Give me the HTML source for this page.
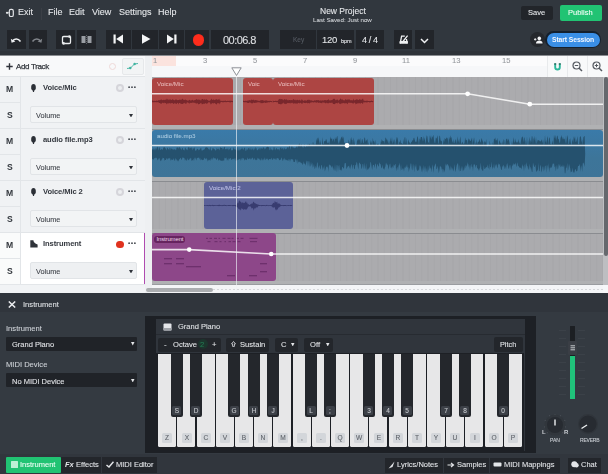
<!DOCTYPE html>
<html><head><meta charset="utf-8">
<style>
*{margin:0;padding:0;box-sizing:border-box}
html,body{width:608px;height:474px;overflow:hidden;background:#31373e;font-family:"Liberation Sans",sans-serif;}
.a{position:absolute;display:block}
.t{position:absolute;white-space:nowrap;line-height:1;-webkit-text-stroke:0.08px currentColor;will-change:transform}
</style></head><body><div id="root" style="position:absolute;left:0;top:0;width:608px;height:474px;overflow:hidden;filter:blur(0.3px)">
<div class="a" style="left:0px;top:0px;width:608px;height:56px;background:#31373e;"></div>
<div class="a" style="left:0px;top:51px;width:608px;height:4px;background:#2e3339;"></div>
<div class="a" style="left:0px;top:55px;width:608px;height:1px;background:#8a8d91;"></div>
<svg class="a" style="left:5px;top:8px;" width="10" height="10" viewBox="0 0 10 10"><rect x="4.3" y="1.3" width="4" height="7.2" rx="1.6" stroke="#e4e6e9" stroke-width="1.2" fill="none"/><circle cx="2" cy="4.8" r="1.1" fill="#e4e6e9"/><path d="M2 4.8 H4.5" stroke="#e4e6e9" stroke-width="0.9"/></svg>
<div class="t" style="left:18px;top:8px;font-size:9px;color:#e6e8eb;">Exit</div>
<div class="a" style="left:41px;top:8px;width:1px;height:12px;background:#3b3f46;"></div>
<div class="t" style="left:48px;top:8px;font-size:9px;color:#e6e8eb;">File</div>
<div class="t" style="left:69px;top:8px;font-size:9px;color:#e6e8eb;">Edit</div>
<div class="t" style="left:92px;top:8px;font-size:9px;color:#e6e8eb;">View</div>
<div class="t" style="left:119px;top:8px;font-size:9px;color:#e6e8eb;">Settings</div>
<div class="t" style="left:158px;top:8px;font-size:9px;color:#e6e8eb;">Help</div>
<div class="t" style="left:320px;top:7px;font-size:8.5px;color:#e6e8eb;">New Project</div>
<div class="t" style="left:313px;top:17px;font-size:6.2px;color:#cfd2d6;">Last Saved: Just now</div>
<div class="a" style="left:521px;top:6px;width:32px;height:14px;background:#22252a;border-radius:2px"></div>
<div class="t" style="left:528px;top:9px;font-size:7.5px;color:#e6e8eb;">Save</div>
<div class="a" style="left:560px;top:5px;width:42px;height:16px;background:#21c373;border-radius:2px"></div>
<div class="t" style="left:568px;top:9px;font-size:7.5px;color:#f2fff7;">Publish</div>
<div class="a" style="left:7px;top:30px;width:19px;height:19px;background:#22252a;"></div>
<div class="a" style="left:29px;top:30px;width:18px;height:19px;background:#22252a;"></div>
<div class="a" style="left:56px;top:30px;width:19px;height:19px;background:#22252a;"></div>
<div class="a" style="left:77px;top:30px;width:19px;height:19px;background:#22252a;"></div>
<div class="a" style="left:106px;top:30px;width:25px;height:19px;background:#22252a;"></div>
<div class="a" style="left:132px;top:30px;width:26px;height:19px;background:#22252a;"></div>
<div class="a" style="left:159px;top:30px;width:25px;height:19px;background:#22252a;"></div>
<div class="a" style="left:185px;top:30px;width:24px;height:19px;background:#22252a;"></div>
<div class="a" style="left:211px;top:30px;width:58px;height:19px;background:#22252a;"></div>
<div class="a" style="left:280px;top:30px;width:36px;height:19px;background:#22252a;"></div>
<div class="a" style="left:317px;top:30px;width:37px;height:19px;background:#22252a;"></div>
<div class="a" style="left:356px;top:30px;width:28px;height:19px;background:#22252a;"></div>
<div class="a" style="left:394px;top:30px;width:18px;height:19px;background:#22252a;"></div>
<div class="a" style="left:415px;top:30px;width:19px;height:19px;background:#22252a;"></div>
<svg class="a" style="left:10px;top:36px;" width="12" height="8" viewBox="0 0 12 8"><path d="M2.5 5.5 C4 2.5 8 2 10.5 5.5" stroke="#eceef0" stroke-width="1.6" fill="none"/><path d="M0.8 2.8 L1.6 6.8 L5.4 5.6 Z" fill="#eceef0"/></svg>
<svg class="a" style="left:31px;top:36px;" width="12" height="8" viewBox="0 0 12 8"><path d="M9.5 5.5 C8 2.5 4 2 1.5 5.5" stroke="#80848a" stroke-width="1.6" fill="none"/><path d="M11.2 2.8 L10.4 6.8 L6.6 5.6 Z" fill="#80848a"/></svg>
<svg class="a" style="left:60.5px;top:34.5px;" width="11" height="10" viewBox="0 0 11 10"><path d="M7.5 1.5 H2.8 Q1.5 1.5 1.5 2.8 V8.5 M3.5 8.5 H8.2 Q9.5 8.5 9.5 7.2 V1.5" stroke="#eceef0" stroke-width="1.3" fill="none"/><circle cx="8.4" cy="1.6" r="1.35" fill="#eceef0"/><circle cx="2.6" cy="8.4" r="1.35" fill="#eceef0"/></svg>
<svg class="a" style="left:80px;top:35px;" width="13" height="9" viewBox="0 0 13 9"><rect x="1.5" y="1" width="4" height="7" fill="#9a9ea4"/><rect x="7.5" y="1" width="4" height="7" fill="#9a9ea4"/><path d="M6.5 0v9" stroke="#6b6f75" stroke-width="0.8" stroke-dasharray="1 1"/></svg>
<svg class="a" style="left:113px;top:34px;" width="11" height="10" viewBox="0 0 11 10"><rect x="0.5" y="0.5" width="2.2" height="9" fill="#f4f5f6"/><path d="M10 0.5 L3.2 5 L10 9.5 Z" fill="#f4f5f6"/></svg>
<svg class="a" style="left:141px;top:34px;" width="10" height="10" viewBox="0 0 10 10"><path d="M1 0.3 L9.5 5 L1 9.7 Z" fill="#f4f5f6"/></svg>
<svg class="a" style="left:167px;top:34px;" width="10" height="10" viewBox="0 0 10 10"><rect x="7.3" y="0.5" width="2.2" height="9" fill="#f4f5f6"/><path d="M0 0.5 L6.8 5 L0 9.5 Z" fill="#f4f5f6"/></svg>
<div class="a" style="left:192.5px;top:34px;width:11.5px;height:11.5px;background:radial-gradient(circle,#ff2d1c 55%,#e0221a 100%);border-radius:50%"></div>
<div class="t" style="left:223px;top:35px;font-size:11px;color:#dfe1e4;letter-spacing:-0.55px">00:06.8</div>
<div class="t" style="left:293px;top:37px;font-size:6.5px;color:#575c64;">Key</div>
<div class="t" style="left:322px;top:35.2px;font-size:9.5px;color:#e6e8eb;letter-spacing:-0.3px">120</div>
<div class="t" style="left:340.5px;top:38.8px;font-size:5.5px;color:#e6e8eb;">bpm</div>
<div class="t" style="left:362px;top:35.5px;font-size:9px;color:#e6e8eb;letter-spacing:-0.4px">4 / 4</div>
<svg class="a" style="left:399px;top:35px;" width="10" height="9" viewBox="0 0 10 9"><path d="M1.2 8.3 L2.6 1.2 H5.8" fill="none" stroke="#f0f1f3" stroke-width="1.3"/><path d="M8.2 8.3 L7.4 4" fill="none" stroke="#f0f1f3" stroke-width="1.3"/><path d="M4 6.5 L8.6 0.6" stroke="#f0f1f3" stroke-width="1.3"/><rect x="0.6" y="6" width="8.2" height="2.8" rx="0.5" fill="#f0f1f3"/></svg>
<svg class="a" style="left:420px;top:38px;" width="9" height="6" viewBox="0 0 9 6"><path d="M1 1 L4.5 4.5 L8 1" stroke="#f0f1f3" stroke-width="1.5" fill="none"/></svg>
<div class="a" style="left:530px;top:32px;width:15px;height:15px;background:#25282d;border-radius:50%"></div>
<svg class="a" style="left:533px;top:35.5px;" width="11" height="9" viewBox="0 0 11 9"><circle cx="6.3" cy="2.4" r="1.8" fill="#f2f3f5"/><path d="M3 7.4 C3 5.4 4.6 4.6 6.3 4.6 C8 4.6 9.6 5.4 9.6 7.4 Z" fill="#f2f3f5"/><path d="M1 3.4h2.4M2.2 2.2v2.4" stroke="#f2f3f5" stroke-width="0.9"/></svg>
<div class="a" style="left:545px;top:31px;width:56px;height:17px;background:#15202d;border-radius:9px"></div>
<div class="a" style="left:546.5px;top:32.5px;width:53px;height:14px;background:#3a8fe6;border-radius:7px"></div>
<div class="t" style="left:552px;top:37.2px;font-size:6.8px;color:#f2f7ff;font-weight:bold;letter-spacing:-0.1px;-webkit-text-stroke:0">Start Session</div>
<div class="a" style="left:0px;top:56px;width:608px;height:237px;background:#f6f7f9;"></div>
<div class="a" style="left:0px;top:56px;width:145px;height:20px;background:#f8f9fa;"></div>
<svg class="a" style="left:6px;top:63px;" width="7" height="7" viewBox="0 0 7 7"><path d="M3.5 0.3v6.4M0.3 3.5h6.4" stroke="#2f333a" stroke-width="1.4"/></svg>
<div class="t" style="left:15.8px;top:62.8px;font-size:8px;color:#33373d;letter-spacing:-0.35px;-webkit-text-stroke:0.25px #33373d">Add Track</div>
<div class="a" style="left:109px;top:63px;width:7.2px;height:7.2px;background:transparent;border-radius:50%;border:1.2px solid #efd9d8"></div>
<div class="a" style="left:121.5px;top:58px;width:22.5px;height:16.5px;background:#f2f4f5;border-radius:2px;border:1px solid #e6e8ea"></div>
<svg class="a" style="left:126px;top:62px;" width="13" height="8" viewBox="0 0 13 8"><path d="M1 6.5 L4.5 6 L8.5 2 L12 1.5" stroke="#3fb3a0" stroke-width="0.9" fill="none"/><circle cx="4.3" cy="6" r="1.2" fill="#3fb3a0"/><circle cx="8.6" cy="2" r="1.2" fill="#3fb3a0"/></svg>
<div class="a" style="left:145px;top:56px;width:7px;height:237px;background:#eef0f2;"></div>
<div class="a" style="left:152px;top:56px;width:456px;height:21px;background:#fbfbfc;"></div>
<div class="a" style="left:152px;top:66px;width:395px;height:11px;background:#f6f7f9;"></div>
<div class="a" style="left:152px;top:56px;width:24px;height:10px;background:#fbe3de;"></div>
<div class="t" style="left:153.3px;top:57px;font-size:7.6px;color:#95989d;">1</div>
<div class="t" style="left:203.3px;top:57px;font-size:7.6px;color:#95989d;">3</div>
<div class="t" style="left:253.3px;top:57px;font-size:7.6px;color:#95989d;">5</div>
<div class="t" style="left:303.3px;top:57px;font-size:7.6px;color:#95989d;">7</div>
<div class="t" style="left:353.3px;top:57px;font-size:7.6px;color:#95989d;">9</div>
<div class="t" style="left:401.6px;top:57px;font-size:7.6px;color:#95989d;">11</div>
<div class="t" style="left:451.6px;top:57px;font-size:7.6px;color:#95989d;">13</div>
<div class="t" style="left:501.6px;top:57px;font-size:7.6px;color:#95989d;">15</div>
<div class="a" style="left:547px;top:56px;width:61px;height:21px;background:#f8f9fa;"></div>
<div class="a" style="left:547px;top:56px;width:1px;height:21px;background:#e8eaec;"></div>
<div class="a" style="left:567px;top:56px;width:1px;height:21px;background:#e8eaec;"></div>
<div class="a" style="left:587px;top:56px;width:1px;height:21px;background:#e8eaec;"></div>
<svg class="a" style="left:554px;top:62.5px;" width="7" height="8" viewBox="0 0 7 8"><path d="M1.2 0.5 V4.2 A2.3 2.3 0 0 0 5.8 4.2 V0.5" stroke="#2bb79a" stroke-width="1.9" fill="none"/><path d="M1.2 0.3 V1.8 M5.8 0.3 V1.8" stroke="#2d6a60" stroke-width="1.9"/></svg>
<svg class="a" style="left:572px;top:61px;" width="11" height="11" viewBox="0 0 11 11"><circle cx="4.5" cy="4.5" r="3.5" stroke="#555a61" stroke-width="1.2" fill="none"/><path d="M7 7 L10 10" stroke="#555a61" stroke-width="1.5"/><path d="M2.8 4.5h3.4" stroke="#555a61" stroke-width="1"/></svg>
<svg class="a" style="left:592px;top:61px;" width="11" height="11" viewBox="0 0 11 11"><circle cx="4.5" cy="4.5" r="3.5" stroke="#555a61" stroke-width="1.2" fill="none"/><path d="M7 7 L10 10" stroke="#555a61" stroke-width="1.5"/><path d="M2.8 4.5h3.4M4.5 2.8v3.4" stroke="#555a61" stroke-width="1"/></svg>
<div class="a" style="left:152px;top:77px;width:451px;height:208px;background:#ababae;"></div>
<svg class="a" style="left:152px;top:77px;" width="451" height="208" viewBox="0 0 451 208"><rect x="0.50" y="0" width="1" height="208" fill="#000" opacity="0.035"/><rect x="6.75" y="0" width="1" height="208" fill="#000" opacity="0.02"/><rect x="13.00" y="0" width="1" height="208" fill="#000" opacity="0.02"/><rect x="19.25" y="0" width="1" height="208" fill="#000" opacity="0.02"/><rect x="25.50" y="0" width="1" height="208" fill="#000" opacity="0.035"/><rect x="31.75" y="0" width="1" height="208" fill="#000" opacity="0.02"/><rect x="38.00" y="0" width="1" height="208" fill="#000" opacity="0.02"/><rect x="44.25" y="0" width="1" height="208" fill="#000" opacity="0.02"/><rect x="50.50" y="0" width="1" height="208" fill="#000" opacity="0.035"/><rect x="56.75" y="0" width="1" height="208" fill="#000" opacity="0.02"/><rect x="63.00" y="0" width="1" height="208" fill="#000" opacity="0.02"/><rect x="69.25" y="0" width="1" height="208" fill="#000" opacity="0.02"/><rect x="75.50" y="0" width="1" height="208" fill="#000" opacity="0.035"/><rect x="81.75" y="0" width="1" height="208" fill="#000" opacity="0.02"/><rect x="88.00" y="0" width="1" height="208" fill="#000" opacity="0.02"/><rect x="94.25" y="0" width="1" height="208" fill="#000" opacity="0.02"/><rect x="100.50" y="0" width="1" height="208" fill="#000" opacity="0.035"/><rect x="106.75" y="0" width="1" height="208" fill="#000" opacity="0.02"/><rect x="113.00" y="0" width="1" height="208" fill="#000" opacity="0.02"/><rect x="119.25" y="0" width="1" height="208" fill="#000" opacity="0.02"/><rect x="125.50" y="0" width="1" height="208" fill="#000" opacity="0.035"/><rect x="131.75" y="0" width="1" height="208" fill="#000" opacity="0.02"/><rect x="138.00" y="0" width="1" height="208" fill="#000" opacity="0.02"/><rect x="144.25" y="0" width="1" height="208" fill="#000" opacity="0.02"/><rect x="150.50" y="0" width="1" height="208" fill="#000" opacity="0.035"/><rect x="156.75" y="0" width="1" height="208" fill="#000" opacity="0.02"/><rect x="163.00" y="0" width="1" height="208" fill="#000" opacity="0.02"/><rect x="169.25" y="0" width="1" height="208" fill="#000" opacity="0.02"/><rect x="175.50" y="0" width="1" height="208" fill="#000" opacity="0.035"/><rect x="181.75" y="0" width="1" height="208" fill="#000" opacity="0.02"/><rect x="188.00" y="0" width="1" height="208" fill="#000" opacity="0.02"/><rect x="194.25" y="0" width="1" height="208" fill="#000" opacity="0.02"/><rect x="200.50" y="0" width="1" height="208" fill="#000" opacity="0.035"/><rect x="206.75" y="0" width="1" height="208" fill="#000" opacity="0.02"/><rect x="213.00" y="0" width="1" height="208" fill="#000" opacity="0.02"/><rect x="219.25" y="0" width="1" height="208" fill="#000" opacity="0.02"/><rect x="225.50" y="0" width="1" height="208" fill="#000" opacity="0.035"/><rect x="231.75" y="0" width="1" height="208" fill="#000" opacity="0.02"/><rect x="238.00" y="0" width="1" height="208" fill="#000" opacity="0.02"/><rect x="244.25" y="0" width="1" height="208" fill="#000" opacity="0.02"/><rect x="250.50" y="0" width="1" height="208" fill="#000" opacity="0.035"/><rect x="256.75" y="0" width="1" height="208" fill="#000" opacity="0.02"/><rect x="263.00" y="0" width="1" height="208" fill="#000" opacity="0.02"/><rect x="269.25" y="0" width="1" height="208" fill="#000" opacity="0.02"/><rect x="275.50" y="0" width="1" height="208" fill="#000" opacity="0.035"/><rect x="281.75" y="0" width="1" height="208" fill="#000" opacity="0.02"/><rect x="288.00" y="0" width="1" height="208" fill="#000" opacity="0.02"/><rect x="294.25" y="0" width="1" height="208" fill="#000" opacity="0.02"/><rect x="300.50" y="0" width="1" height="208" fill="#000" opacity="0.035"/><rect x="306.75" y="0" width="1" height="208" fill="#000" opacity="0.02"/><rect x="313.00" y="0" width="1" height="208" fill="#000" opacity="0.02"/><rect x="319.25" y="0" width="1" height="208" fill="#000" opacity="0.02"/><rect x="325.50" y="0" width="1" height="208" fill="#000" opacity="0.035"/><rect x="331.75" y="0" width="1" height="208" fill="#000" opacity="0.02"/><rect x="338.00" y="0" width="1" height="208" fill="#000" opacity="0.02"/><rect x="344.25" y="0" width="1" height="208" fill="#000" opacity="0.02"/><rect x="350.50" y="0" width="1" height="208" fill="#000" opacity="0.035"/><rect x="356.75" y="0" width="1" height="208" fill="#000" opacity="0.02"/><rect x="363.00" y="0" width="1" height="208" fill="#000" opacity="0.02"/><rect x="369.25" y="0" width="1" height="208" fill="#000" opacity="0.02"/><rect x="375.50" y="0" width="1" height="208" fill="#000" opacity="0.035"/><rect x="381.75" y="0" width="1" height="208" fill="#000" opacity="0.02"/><rect x="388.00" y="0" width="1" height="208" fill="#000" opacity="0.02"/><rect x="394.25" y="0" width="1" height="208" fill="#000" opacity="0.02"/><rect x="400.50" y="0" width="1" height="208" fill="#000" opacity="0.035"/><rect x="406.75" y="0" width="1" height="208" fill="#000" opacity="0.02"/><rect x="413.00" y="0" width="1" height="208" fill="#000" opacity="0.02"/><rect x="419.25" y="0" width="1" height="208" fill="#000" opacity="0.02"/><rect x="425.50" y="0" width="1" height="208" fill="#000" opacity="0.035"/><rect x="431.75" y="0" width="1" height="208" fill="#000" opacity="0.02"/><rect x="438.00" y="0" width="1" height="208" fill="#000" opacity="0.02"/><rect x="444.25" y="0" width="1" height="208" fill="#000" opacity="0.02"/><rect x="450.50" y="0" width="1" height="208" fill="#000" opacity="0.035"/></svg>
<div class="a" style="left:152px;top:125px;width:451px;height:4px;background:#b0b1b3;"></div>
<div class="a" style="left:152px;top:129px;width:451px;height:1px;background:#8a8c90;"></div>
<div class="a" style="left:152px;top:177px;width:451px;height:4px;background:#b0b1b3;"></div>
<div class="a" style="left:152px;top:181px;width:451px;height:1px;background:#8a8c90;"></div>
<div class="a" style="left:152px;top:229px;width:451px;height:4px;background:#b0b1b3;"></div>
<div class="a" style="left:152px;top:233px;width:451px;height:1px;background:#8a8c90;"></div>
<div class="a" style="left:152px;top:281px;width:451px;height:4px;background:#b0b1b3;"></div>
<div class="a" style="left:152px;top:284px;width:451px;height:1px;background:#9a9ca0;"></div>
<div class="a" style="left:603px;top:77px;width:5px;height:208px;background:#bdbec1;"></div>
<div class="a" style="left:603.5px;top:77px;width:4px;height:179px;background:#65686d;border-radius:2px"></div>
<div class="a" style="left:0px;top:76px;width:145px;height:52px;background:#f0f2f4;"></div>
<div class="a" style="left:20px;top:76px;width:125px;height:52px;background:#f0f2f4;"></div>
<div class="a" style="left:0px;top:76px;width:145px;height:1px;background:#e2e5e8;"></div>
<div class="a" style="left:0px;top:101.5px;width:20px;height:1px;background:#e2e5e8;"></div>
<div class="a" style="left:19.5px;top:76px;width:1px;height:52px;background:#e2e5e8;"></div>
<div class="t" style="left:5.6px;top:85.1px;font-size:8.6px;color:#33373d;font-weight:bold;-webkit-text-stroke:0">M</div>
<div class="t" style="left:7.2px;top:111.2px;font-size:8.6px;color:#33373d;font-weight:bold;-webkit-text-stroke:0">S</div>
<svg class="a" style="left:31px;top:83.8px;" width="5" height="8.5" viewBox="0 0 5 8.5"><path d="M2.5 0 C3.9 0 4.8 1.1 4.8 2.8 L4.8 4.6 C4.8 5.8 3.7 6.3 3.1 6.9 L3.1 8.3 L1.9 8.3 L1.9 6.9 C1.3 6.3 0.2 5.8 0.2 4.6 L0.2 2.8 C0.2 1.1 1.1 0 2.5 0 Z" fill="#2b2f36"/></svg>
<div class="t" style="left:42.5px;top:84.4px;font-size:7.6px;color:#34383f;font-weight:bold;letter-spacing:-0.1px;-webkit-text-stroke:0">Voice/Mic</div>
<div class="a" style="left:115.8px;top:84.2px;width:7.8px;height:7.8px;background:#eceef0;border-radius:50%;border:2px solid #d5d5da"></div>
<svg class="a" style="left:127.5px;top:86.3px;" width="8" height="3" viewBox="0 0 8 3"><circle cx="1.1" cy="1.2" r="0.85" fill="#3a3e45"/><circle cx="4" cy="1.2" r="0.85" fill="#3a3e45"/><circle cx="6.9" cy="1.2" r="0.85" fill="#3a3e45"/></svg>
<div class="a" style="left:30px;top:106px;width:107px;height:16.5px;background:#f2f4f5;border-radius:2px;border:1px solid #e1e4e7"></div>
<div class="t" style="left:35.5px;top:112px;font-size:7.3px;color:#3d4148;">Volume</div>
<svg class="a" style="left:128.5px;top:113.5px;" width="4" height="3.5" viewBox="0 0 4 3.5"><path d="M0 0h4L2 3.5z" fill="#2f333a"/></svg>
<div class="a" style="left:0px;top:128px;width:145px;height:52px;background:#f0f2f4;"></div>
<div class="a" style="left:20px;top:128px;width:125px;height:52px;background:#f0f2f4;"></div>
<div class="a" style="left:0px;top:128px;width:145px;height:1px;background:#e2e5e8;"></div>
<div class="a" style="left:0px;top:153.5px;width:20px;height:1px;background:#e2e5e8;"></div>
<div class="a" style="left:19.5px;top:128px;width:1px;height:52px;background:#e2e5e8;"></div>
<div class="t" style="left:5.6px;top:137.1px;font-size:8.6px;color:#33373d;font-weight:bold;-webkit-text-stroke:0">M</div>
<div class="t" style="left:7.2px;top:163.2px;font-size:8.6px;color:#33373d;font-weight:bold;-webkit-text-stroke:0">S</div>
<svg class="a" style="left:31px;top:135.8px;" width="5" height="8.5" viewBox="0 0 5 8.5"><path d="M2.5 0 C3.9 0 4.8 1.1 4.8 2.8 L4.8 4.6 C4.8 5.8 3.7 6.3 3.1 6.9 L3.1 8.3 L1.9 8.3 L1.9 6.9 C1.3 6.3 0.2 5.8 0.2 4.6 L0.2 2.8 C0.2 1.1 1.1 0 2.5 0 Z" fill="#2b2f36"/></svg>
<div class="t" style="left:42.5px;top:136.4px;font-size:7.6px;color:#34383f;font-weight:bold;letter-spacing:-0.1px;-webkit-text-stroke:0">audio file.mp3</div>
<div class="a" style="left:115.8px;top:136.2px;width:7.8px;height:7.8px;background:#eceef0;border-radius:50%;border:2px solid #d5d5da"></div>
<svg class="a" style="left:127.5px;top:138.3px;" width="8" height="3" viewBox="0 0 8 3"><circle cx="1.1" cy="1.2" r="0.85" fill="#3a3e45"/><circle cx="4" cy="1.2" r="0.85" fill="#3a3e45"/><circle cx="6.9" cy="1.2" r="0.85" fill="#3a3e45"/></svg>
<div class="a" style="left:30px;top:158px;width:107px;height:16.5px;background:#f2f4f5;border-radius:2px;border:1px solid #e1e4e7"></div>
<div class="t" style="left:35.5px;top:164px;font-size:7.3px;color:#3d4148;">Volume</div>
<svg class="a" style="left:128.5px;top:165.5px;" width="4" height="3.5" viewBox="0 0 4 3.5"><path d="M0 0h4L2 3.5z" fill="#2f333a"/></svg>
<div class="a" style="left:0px;top:180px;width:145px;height:52px;background:#f0f2f4;"></div>
<div class="a" style="left:20px;top:180px;width:125px;height:52px;background:#f0f2f4;"></div>
<div class="a" style="left:0px;top:180px;width:145px;height:1px;background:#e2e5e8;"></div>
<div class="a" style="left:0px;top:205.5px;width:20px;height:1px;background:#e2e5e8;"></div>
<div class="a" style="left:19.5px;top:180px;width:1px;height:52px;background:#e2e5e8;"></div>
<div class="t" style="left:5.6px;top:189.1px;font-size:8.6px;color:#33373d;font-weight:bold;-webkit-text-stroke:0">M</div>
<div class="t" style="left:7.2px;top:215.2px;font-size:8.6px;color:#33373d;font-weight:bold;-webkit-text-stroke:0">S</div>
<svg class="a" style="left:31px;top:187.8px;" width="5" height="8.5" viewBox="0 0 5 8.5"><path d="M2.5 0 C3.9 0 4.8 1.1 4.8 2.8 L4.8 4.6 C4.8 5.8 3.7 6.3 3.1 6.9 L3.1 8.3 L1.9 8.3 L1.9 6.9 C1.3 6.3 0.2 5.8 0.2 4.6 L0.2 2.8 C0.2 1.1 1.1 0 2.5 0 Z" fill="#2b2f36"/></svg>
<div class="t" style="left:42.5px;top:188.4px;font-size:7.6px;color:#34383f;font-weight:bold;letter-spacing:-0.1px;-webkit-text-stroke:0">Voice/Mic 2</div>
<div class="a" style="left:115.8px;top:188.2px;width:7.8px;height:7.8px;background:#eceef0;border-radius:50%;border:2px solid #d5d5da"></div>
<svg class="a" style="left:127.5px;top:190.3px;" width="8" height="3" viewBox="0 0 8 3"><circle cx="1.1" cy="1.2" r="0.85" fill="#3a3e45"/><circle cx="4" cy="1.2" r="0.85" fill="#3a3e45"/><circle cx="6.9" cy="1.2" r="0.85" fill="#3a3e45"/></svg>
<div class="a" style="left:30px;top:210px;width:107px;height:16.5px;background:#f2f4f5;border-radius:2px;border:1px solid #e1e4e7"></div>
<div class="t" style="left:35.5px;top:216px;font-size:7.3px;color:#3d4148;">Volume</div>
<svg class="a" style="left:128.5px;top:217.5px;" width="4" height="3.5" viewBox="0 0 4 3.5"><path d="M0 0h4L2 3.5z" fill="#2f333a"/></svg>
<div class="a" style="left:0px;top:232px;width:145px;height:52px;background:#fafbfb;"></div>
<div class="a" style="left:20px;top:232px;width:125px;height:52px;background:#ffffff;"></div>
<div class="a" style="left:0px;top:232px;width:145px;height:1px;background:#e2e5e8;"></div>
<div class="a" style="left:0px;top:257.5px;width:20px;height:1px;background:#e2e5e8;"></div>
<div class="a" style="left:19.5px;top:232px;width:1px;height:52px;background:#e2e5e8;"></div>
<div class="t" style="left:5.6px;top:241.1px;font-size:8.6px;color:#33373d;font-weight:bold;-webkit-text-stroke:0">M</div>
<div class="t" style="left:7.2px;top:267.2px;font-size:8.6px;color:#33373d;font-weight:bold;-webkit-text-stroke:0">S</div>
<svg class="a" style="left:29.5px;top:240px;" width="8" height="8" viewBox="0 0 8 8"><path d="M0.3 0.3 H3.4 C3.6 2.6 5 3.6 7.6 4.4 V7.6 H0.3 Z" fill="#2f333a"/></svg>
<div class="t" style="left:42.5px;top:240.4px;font-size:7.6px;color:#34383f;font-weight:bold;letter-spacing:-0.1px;-webkit-text-stroke:0">Instrument</div>
<div class="a" style="left:116px;top:240.5px;width:7.5px;height:7.5px;background:#e0321e;border-radius:50%"></div>
<div class="a" style="left:143.5px;top:233px;width:1.5px;height:51px;background:#b04bb0;"></div>
<svg class="a" style="left:127.5px;top:242.3px;" width="8" height="3" viewBox="0 0 8 3"><circle cx="1.1" cy="1.2" r="0.85" fill="#3a3e45"/><circle cx="4" cy="1.2" r="0.85" fill="#3a3e45"/><circle cx="6.9" cy="1.2" r="0.85" fill="#3a3e45"/></svg>
<div class="a" style="left:30px;top:262px;width:107px;height:16.5px;background:#eef0f2;border-radius:2px;border:1px solid #e1e4e7"></div>
<div class="t" style="left:35.5px;top:268px;font-size:7.3px;color:#3d4148;">Volume</div>
<svg class="a" style="left:128.5px;top:269.5px;" width="4" height="3.5" viewBox="0 0 4 3.5"><path d="M0 0h4L2 3.5z" fill="#2f333a"/></svg>
<div class="a" style="left:0px;top:284px;width:145px;height:9px;background:#f1f3f5;"></div>
<div class="a" style="left:0px;top:284px;width:145px;height:1px;background:#e3e6e9;"></div>
<div class="a" style="left:152px;top:285px;width:451px;height:8px;background:#f4f5f7;"></div>
<svg class="a" style="left:152px;top:289px;" width="451" height="1" viewBox="0 0 451 1"><rect x="1.00" y="0" width="2" height="1" fill="#d5d7da"/><rect x="5.00" y="0" width="2" height="1" fill="#d5d7da"/><rect x="9.00" y="0" width="2" height="1" fill="#d5d7da"/><rect x="13.00" y="0" width="2" height="1" fill="#d5d7da"/><rect x="17.00" y="0" width="2" height="1" fill="#d5d7da"/><rect x="21.00" y="0" width="2" height="1" fill="#d5d7da"/><rect x="25.00" y="0" width="2" height="1" fill="#d5d7da"/><rect x="29.00" y="0" width="2" height="1" fill="#d5d7da"/><rect x="33.00" y="0" width="2" height="1" fill="#d5d7da"/><rect x="37.00" y="0" width="2" height="1" fill="#d5d7da"/><rect x="41.00" y="0" width="2" height="1" fill="#d5d7da"/><rect x="45.00" y="0" width="2" height="1" fill="#d5d7da"/><rect x="49.00" y="0" width="2" height="1" fill="#d5d7da"/><rect x="53.00" y="0" width="2" height="1" fill="#d5d7da"/><rect x="57.00" y="0" width="2" height="1" fill="#d5d7da"/><rect x="61.00" y="0" width="2" height="1" fill="#d5d7da"/><rect x="65.00" y="0" width="2" height="1" fill="#d5d7da"/><rect x="69.00" y="0" width="2" height="1" fill="#d5d7da"/><rect x="73.00" y="0" width="2" height="1" fill="#d5d7da"/><rect x="77.00" y="0" width="2" height="1" fill="#d5d7da"/><rect x="81.00" y="0" width="2" height="1" fill="#d5d7da"/><rect x="85.00" y="0" width="2" height="1" fill="#d5d7da"/><rect x="89.00" y="0" width="2" height="1" fill="#d5d7da"/><rect x="93.00" y="0" width="2" height="1" fill="#d5d7da"/><rect x="97.00" y="0" width="2" height="1" fill="#d5d7da"/><rect x="101.00" y="0" width="2" height="1" fill="#d5d7da"/><rect x="105.00" y="0" width="2" height="1" fill="#d5d7da"/><rect x="109.00" y="0" width="2" height="1" fill="#d5d7da"/><rect x="113.00" y="0" width="2" height="1" fill="#d5d7da"/><rect x="117.00" y="0" width="2" height="1" fill="#d5d7da"/><rect x="121.00" y="0" width="2" height="1" fill="#d5d7da"/><rect x="125.00" y="0" width="2" height="1" fill="#d5d7da"/><rect x="129.00" y="0" width="2" height="1" fill="#d5d7da"/><rect x="133.00" y="0" width="2" height="1" fill="#d5d7da"/><rect x="137.00" y="0" width="2" height="1" fill="#d5d7da"/><rect x="141.00" y="0" width="2" height="1" fill="#d5d7da"/><rect x="145.00" y="0" width="2" height="1" fill="#d5d7da"/><rect x="149.00" y="0" width="2" height="1" fill="#d5d7da"/><rect x="153.00" y="0" width="2" height="1" fill="#d5d7da"/><rect x="157.00" y="0" width="2" height="1" fill="#d5d7da"/><rect x="161.00" y="0" width="2" height="1" fill="#d5d7da"/><rect x="165.00" y="0" width="2" height="1" fill="#d5d7da"/><rect x="169.00" y="0" width="2" height="1" fill="#d5d7da"/><rect x="173.00" y="0" width="2" height="1" fill="#d5d7da"/><rect x="177.00" y="0" width="2" height="1" fill="#d5d7da"/><rect x="181.00" y="0" width="2" height="1" fill="#d5d7da"/><rect x="185.00" y="0" width="2" height="1" fill="#d5d7da"/><rect x="189.00" y="0" width="2" height="1" fill="#d5d7da"/><rect x="193.00" y="0" width="2" height="1" fill="#d5d7da"/><rect x="197.00" y="0" width="2" height="1" fill="#d5d7da"/><rect x="201.00" y="0" width="2" height="1" fill="#d5d7da"/><rect x="205.00" y="0" width="2" height="1" fill="#d5d7da"/><rect x="209.00" y="0" width="2" height="1" fill="#d5d7da"/><rect x="213.00" y="0" width="2" height="1" fill="#d5d7da"/><rect x="217.00" y="0" width="2" height="1" fill="#d5d7da"/><rect x="221.00" y="0" width="2" height="1" fill="#d5d7da"/><rect x="225.00" y="0" width="2" height="1" fill="#d5d7da"/><rect x="229.00" y="0" width="2" height="1" fill="#d5d7da"/><rect x="233.00" y="0" width="2" height="1" fill="#d5d7da"/><rect x="237.00" y="0" width="2" height="1" fill="#d5d7da"/><rect x="241.00" y="0" width="2" height="1" fill="#d5d7da"/><rect x="245.00" y="0" width="2" height="1" fill="#d5d7da"/><rect x="249.00" y="0" width="2" height="1" fill="#d5d7da"/><rect x="253.00" y="0" width="2" height="1" fill="#d5d7da"/><rect x="257.00" y="0" width="2" height="1" fill="#d5d7da"/><rect x="261.00" y="0" width="2" height="1" fill="#d5d7da"/><rect x="265.00" y="0" width="2" height="1" fill="#d5d7da"/><rect x="269.00" y="0" width="2" height="1" fill="#d5d7da"/><rect x="273.00" y="0" width="2" height="1" fill="#d5d7da"/><rect x="277.00" y="0" width="2" height="1" fill="#d5d7da"/><rect x="281.00" y="0" width="2" height="1" fill="#d5d7da"/><rect x="285.00" y="0" width="2" height="1" fill="#d5d7da"/><rect x="289.00" y="0" width="2" height="1" fill="#d5d7da"/><rect x="293.00" y="0" width="2" height="1" fill="#d5d7da"/><rect x="297.00" y="0" width="2" height="1" fill="#d5d7da"/><rect x="301.00" y="0" width="2" height="1" fill="#d5d7da"/><rect x="305.00" y="0" width="2" height="1" fill="#d5d7da"/><rect x="309.00" y="0" width="2" height="1" fill="#d5d7da"/><rect x="313.00" y="0" width="2" height="1" fill="#d5d7da"/><rect x="317.00" y="0" width="2" height="1" fill="#d5d7da"/><rect x="321.00" y="0" width="2" height="1" fill="#d5d7da"/><rect x="325.00" y="0" width="2" height="1" fill="#d5d7da"/><rect x="329.00" y="0" width="2" height="1" fill="#d5d7da"/><rect x="333.00" y="0" width="2" height="1" fill="#d5d7da"/><rect x="337.00" y="0" width="2" height="1" fill="#d5d7da"/><rect x="341.00" y="0" width="2" height="1" fill="#d5d7da"/><rect x="345.00" y="0" width="2" height="1" fill="#d5d7da"/><rect x="349.00" y="0" width="2" height="1" fill="#d5d7da"/><rect x="353.00" y="0" width="2" height="1" fill="#d5d7da"/><rect x="357.00" y="0" width="2" height="1" fill="#d5d7da"/><rect x="361.00" y="0" width="2" height="1" fill="#d5d7da"/><rect x="365.00" y="0" width="2" height="1" fill="#d5d7da"/><rect x="369.00" y="0" width="2" height="1" fill="#d5d7da"/><rect x="373.00" y="0" width="2" height="1" fill="#d5d7da"/><rect x="377.00" y="0" width="2" height="1" fill="#d5d7da"/><rect x="381.00" y="0" width="2" height="1" fill="#d5d7da"/><rect x="385.00" y="0" width="2" height="1" fill="#d5d7da"/><rect x="389.00" y="0" width="2" height="1" fill="#d5d7da"/><rect x="393.00" y="0" width="2" height="1" fill="#d5d7da"/><rect x="397.00" y="0" width="2" height="1" fill="#d5d7da"/><rect x="401.00" y="0" width="2" height="1" fill="#d5d7da"/><rect x="405.00" y="0" width="2" height="1" fill="#d5d7da"/><rect x="409.00" y="0" width="2" height="1" fill="#d5d7da"/><rect x="413.00" y="0" width="2" height="1" fill="#d5d7da"/><rect x="417.00" y="0" width="2" height="1" fill="#d5d7da"/><rect x="421.00" y="0" width="2" height="1" fill="#d5d7da"/><rect x="425.00" y="0" width="2" height="1" fill="#d5d7da"/><rect x="429.00" y="0" width="2" height="1" fill="#d5d7da"/><rect x="433.00" y="0" width="2" height="1" fill="#d5d7da"/><rect x="437.00" y="0" width="2" height="1" fill="#d5d7da"/><rect x="441.00" y="0" width="2" height="1" fill="#d5d7da"/><rect x="445.00" y="0" width="2" height="1" fill="#d5d7da"/><rect x="449.00" y="0" width="2" height="1" fill="#d5d7da"/></svg>
<div class="a" style="left:145.5px;top:288px;width:67.5px;height:4px;background:#abadb0;border-radius:2px"></div>
<div class="a" style="left:152px;top:77.5px;width:81px;height:47.5px;background:#ad4543;border-radius:3px;overflow:hidden">
<svg class="a" style="left:0;top:0" width="81" height="47.5" viewBox="0 0 81 47.5"><path d="M0.0 22.8 L0.6 22.6 L1.2 22.8 L1.8 22.9 L2.4 22.7 L3.0 23.0 L3.6 23.0 L4.2 22.7 L4.8 22.6 L5.4 22.7 L6.0 23.0 L6.6 22.0 L7.2 22.0 L7.8 22.5 L8.4 21.9 L9.0 21.5 L9.6 21.5 L10.2 22.3 L10.8 22.0 L11.4 22.1 L12.0 21.5 L12.6 22.2 L13.2 21.8 L13.8 21.8 L14.4 20.4 L15.0 22.6 L15.6 20.7 L16.2 21.2 L16.8 22.3 L17.4 21.1 L18.0 22.6 L18.6 21.0 L19.2 22.1 L19.8 21.9 L20.4 21.3 L21.0 21.2 L21.6 21.9 L22.2 22.0 L22.8 22.6 L23.4 21.7 L24.0 21.0 L24.6 21.8 L25.2 22.2 L25.8 22.1 L26.4 21.9 L27.0 22.1 L27.6 21.4 L28.2 21.6 L28.8 21.9 L29.4 21.7 L30.0 21.3 L30.6 20.5 L31.2 21.7 L31.8 21.7 L32.4 21.8 L33.0 22.3 L33.6 21.2 L34.2 22.0 L34.8 22.2 L35.4 22.5 L36.0 22.8 L36.6 22.5 L37.2 21.8 L37.8 22.0 L38.4 22.4 L39.0 22.4 L39.6 22.2 L40.2 21.9 L40.8 21.8 L41.4 22.7 L42.0 22.2 L42.6 22.3 L43.2 21.8 L43.8 22.0 L44.4 21.1 L45.0 21.3 L45.6 21.8 L46.2 22.2 L46.8 21.1 L47.4 22.1 L48.0 21.6 L48.6 22.4 L49.2 22.6 L49.8 21.0 L50.4 20.9 L51.0 20.9 L51.6 21.9 L52.2 21.3 L52.8 21.6 L53.4 21.9 L54.0 21.2 L54.6 21.2 L55.2 22.3 L55.8 21.7 L56.4 22.7 L57.0 22.7 L57.6 22.8 L58.2 22.5 L58.8 21.8 L59.4 20.5 L60.0 21.8 L60.6 21.9 L61.2 21.3 L61.8 21.7 L62.4 22.2 L63.0 21.5 L63.6 21.7 L64.2 21.2 L64.8 21.3 L65.4 21.8 L66.0 21.8 L66.6 21.0 L67.2 22.5 L67.8 20.5 L68.4 22.7 L69.0 22.9 L69.6 22.8 L70.2 22.9 L70.8 22.7 L71.4 22.9 L72.0 22.6 L72.6 23.0 L73.2 22.6 L73.8 22.7 L74.4 22.9 L75.0 23.1 L75.6 22.8 L76.2 22.7 L76.8 23.0 L77.4 22.7 L78.0 22.7 L78.6 22.7 L79.2 22.7 L79.8 22.8 L80.4 23.1 L81.0 22.7 L81.0 24.1 L80.4 24.2 L79.8 24.1 L79.2 24.1 L78.6 24.4 L78.0 24.3 L77.4 24.2 L76.8 23.9 L76.2 24.1 L75.6 23.9 L75.0 24.0 L74.4 24.3 L73.8 24.2 L73.2 23.9 L72.6 23.9 L72.0 24.2 L71.4 24.3 L70.8 24.2 L70.2 24.2 L69.6 24.1 L69.0 24.0 L68.4 24.4 L67.8 26.5 L67.2 24.9 L66.6 25.6 L66.0 24.8 L65.4 25.2 L64.8 26.2 L64.2 26.4 L63.6 25.7 L63.0 25.3 L62.4 24.7 L61.8 25.7 L61.2 25.0 L60.6 25.3 L60.0 25.0 L59.4 26.0 L58.8 26.4 L58.2 25.2 L57.6 24.3 L57.0 24.2 L56.4 24.2 L55.8 25.2 L55.2 25.5 L54.6 25.8 L54.0 25.5 L53.4 24.9 L52.8 25.8 L52.2 25.7 L51.6 25.5 L51.0 26.3 L50.4 26.1 L49.8 26.2 L49.2 24.8 L48.6 25.1 L48.0 25.7 L47.4 26.1 L46.8 26.2 L46.2 26.2 L45.6 24.9 L45.0 25.6 L44.4 25.6 L43.8 25.4 L43.2 24.7 L42.6 25.0 L42.0 24.4 L41.4 24.7 L40.8 24.6 L40.2 24.8 L39.6 25.0 L39.0 24.8 L38.4 25.1 L37.8 24.7 L37.2 25.9 L36.6 24.8 L36.0 24.8 L35.4 24.3 L34.8 24.6 L34.2 25.9 L33.6 26.0 L33.0 24.6 L32.4 25.2 L31.8 25.2 L31.2 25.5 L30.6 25.9 L30.0 25.9 L29.4 25.8 L28.8 26.0 L28.2 24.9 L27.6 25.1 L27.0 25.0 L26.4 26.5 L25.8 24.8 L25.2 25.0 L24.6 25.9 L24.0 25.8 L23.4 25.4 L22.8 24.7 L22.2 25.8 L21.6 25.9 L21.0 25.6 L20.4 24.9 L19.8 25.0 L19.2 25.2 L18.6 25.8 L18.0 24.7 L17.4 25.2 L16.8 25.4 L16.2 25.2 L15.6 25.8 L15.0 24.9 L14.4 26.5 L13.8 24.9 L13.2 24.9 L12.6 24.5 L12.0 25.4 L11.4 24.8 L10.8 25.0 L10.2 24.6 L9.6 25.7 L9.0 25.7 L8.4 25.5 L7.8 25.1 L7.2 25.1 L6.6 24.4 L6.0 23.9 L5.4 24.3 L4.8 24.4 L4.2 23.9 L3.6 24.3 L3.0 24.1 L2.4 24.3 L1.8 24.2 L1.2 24.3 L0.6 24.2 L0.0 24.2 Z" fill="#79272c"/></svg>
<div class="t" style="left:4.5px;top:3.8px;font-size:6.2px;color:#e3b0b0">Voice/Mic</div>
</div>
<div class="a" style="left:243px;top:77.5px;width:29.5px;height:47.5px;background:#ad4543;border-radius:3px;overflow:hidden">
<svg class="a" style="left:0;top:0" width="29.5" height="47.5" viewBox="0 0 29.5 47.5"><path d="M0.0 22.8 L0.6 22.7 L1.2 23.1 L1.8 22.9 L2.4 22.7 L3.0 22.8 L3.6 23.0 L4.2 22.5 L4.8 22.8 L5.4 22.5 L6.0 22.2 L6.6 22.1 L7.2 22.8 L7.8 22.0 L8.4 21.6 L9.0 22.0 L9.6 22.1 L10.2 21.4 L10.8 22.1 L11.4 22.5 L12.0 21.9 L12.6 22.1 L13.2 22.4 L13.8 22.1 L14.4 22.6 L15.0 22.8 L15.6 22.7 L16.2 22.9 L16.8 22.7 L17.4 22.3 L18.0 22.5 L18.6 22.0 L19.2 22.2 L19.8 22.0 L20.4 22.4 L21.0 22.7 L21.6 22.8 L22.2 22.5 L22.8 22.6 L23.4 22.3 L24.0 22.8 L24.6 22.8 L25.2 23.0 L25.8 22.8 L26.4 22.7 L27.0 23.1 L27.6 22.7 L28.2 22.9 L28.8 23.1 L29.4 22.6 L29.4 24.4 L28.8 24.3 L28.2 23.9 L27.6 24.1 L27.0 24.1 L26.4 24.4 L25.8 24.1 L25.2 24.4 L24.6 24.4 L24.0 24.4 L23.4 24.8 L22.8 24.9 L22.2 24.7 L21.6 24.4 L21.0 24.6 L20.4 25.1 L19.8 25.3 L19.2 25.0 L18.6 25.1 L18.0 25.5 L17.4 24.5 L16.8 24.4 L16.2 24.2 L15.6 24.3 L15.0 24.2 L14.4 24.3 L13.8 25.0 L13.2 24.2 L12.6 24.8 L12.0 25.1 L11.4 25.0 L10.8 24.3 L10.2 25.0 L9.6 25.2 L9.0 25.5 L8.4 25.3 L7.8 24.5 L7.2 24.8 L6.6 24.2 L6.0 24.9 L5.4 25.1 L4.8 24.8 L4.2 25.1 L3.6 24.2 L3.0 24.3 L2.4 24.3 L1.8 24.3 L1.2 24.2 L0.6 24.0 L0.0 24.3 Z" fill="#79272c"/></svg>
<div class="t" style="left:4.5px;top:3.8px;font-size:6.2px;color:#e3b0b0">Voic</div>
</div>
<div class="a" style="left:273px;top:77.5px;width:100.5px;height:47.5px;background:#ad4543;border-radius:3px;overflow:hidden">
<svg class="a" style="left:0;top:0" width="100.5" height="47.5" viewBox="0 0 100.5 47.5"><path d="M0.0 22.9 L0.6 22.7 L1.2 22.9 L1.8 23.0 L2.4 22.7 L3.0 22.8 L3.6 22.9 L4.2 22.7 L4.8 23.1 L5.4 22.0 L6.0 21.1 L6.6 20.9 L7.2 20.7 L7.8 21.4 L8.4 21.1 L9.0 21.2 L9.6 21.3 L10.2 22.5 L10.8 21.4 L11.4 21.3 L12.0 21.0 L12.6 22.0 L13.2 21.2 L13.8 21.6 L14.4 22.4 L15.0 21.6 L15.6 22.4 L16.2 21.9 L16.8 22.0 L17.4 22.2 L18.0 22.1 L18.6 21.9 L19.2 22.6 L19.8 21.7 L20.4 20.9 L21.0 21.4 L21.6 21.9 L22.2 22.4 L22.8 21.4 L23.4 22.5 L24.0 21.4 L24.6 21.9 L25.2 22.1 L25.8 22.5 L26.4 21.4 L27.0 22.4 L27.6 22.5 L28.2 22.6 L28.8 20.9 L29.4 22.1 L30.0 22.5 L30.6 22.9 L31.2 22.3 L31.8 22.4 L32.4 22.5 L33.0 22.2 L33.6 23.0 L34.2 21.8 L34.8 22.0 L35.4 21.6 L36.0 22.5 L36.6 21.5 L37.2 22.6 L37.8 22.2 L38.4 22.3 L39.0 22.7 L39.6 22.8 L40.2 23.0 L40.8 22.8 L41.4 22.4 L42.0 21.9 L42.6 22.7 L43.2 22.2 L43.8 22.1 L44.4 22.2 L45.0 22.2 L45.6 22.1 L46.2 22.7 L46.8 22.4 L47.4 22.2 L48.0 22.7 L48.6 22.4 L49.2 22.2 L49.8 22.6 L50.4 22.6 L51.0 22.5 L51.6 22.0 L52.2 22.1 L52.8 22.2 L53.4 22.6 L54.0 21.9 L54.6 22.0 L55.2 21.7 L55.8 21.1 L56.4 22.7 L57.0 22.1 L57.6 22.4 L58.2 22.3 L58.8 21.9 L59.4 21.9 L60.0 21.0 L60.6 20.7 L61.2 21.2 L61.8 20.6 L62.4 22.1 L63.0 22.4 L63.6 21.4 L64.2 21.9 L64.8 21.3 L65.4 22.7 L66.0 22.3 L66.6 21.7 L67.2 20.8 L67.8 20.6 L68.4 21.2 L69.0 22.3 L69.6 21.0 L70.2 22.3 L70.8 22.2 L71.4 22.5 L72.0 22.0 L72.6 20.9 L73.2 21.5 L73.8 21.9 L74.4 21.5 L75.0 21.4 L75.6 21.5 L76.2 21.6 L76.8 21.6 L77.4 22.6 L78.0 22.0 L78.6 22.2 L79.2 22.4 L79.8 22.3 L80.4 20.6 L81.0 22.4 L81.6 22.2 L82.2 22.0 L82.8 21.7 L83.4 21.2 L84.0 21.5 L84.6 21.6 L85.2 21.9 L85.8 22.1 L86.4 21.1 L87.0 21.6 L87.6 21.7 L88.2 21.4 L88.8 22.1 L89.4 21.0 L90.0 20.5 L90.6 22.6 L91.2 22.7 L91.8 22.7 L92.4 23.0 L93.0 22.8 L93.6 22.7 L94.2 22.8 L94.8 22.8 L95.4 23.0 L96.0 23.0 L96.6 22.9 L97.2 22.9 L97.8 22.9 L98.4 22.6 L99.0 23.0 L99.6 23.0 L100.2 22.9 L100.2 24.0 L99.6 24.2 L99.0 24.0 L98.4 24.0 L97.8 24.1 L97.2 24.4 L96.6 24.4 L96.0 24.1 L95.4 24.1 L94.8 24.3 L94.2 24.2 L93.6 24.4 L93.0 24.3 L92.4 24.2 L91.8 24.2 L91.2 24.4 L90.6 24.1 L90.0 25.8 L89.4 25.8 L88.8 24.7 L88.2 25.1 L87.6 25.6 L87.0 25.4 L86.4 25.0 L85.8 25.7 L85.2 24.7 L84.6 25.4 L84.0 25.4 L83.4 25.7 L82.8 26.6 L82.2 24.9 L81.6 24.7 L81.0 24.4 L80.4 25.8 L79.8 25.5 L79.2 24.9 L78.6 24.9 L78.0 24.6 L77.4 24.9 L76.8 24.7 L76.2 24.7 L75.6 24.4 L75.0 25.3 L74.4 26.3 L73.8 25.4 L73.2 25.1 L72.6 25.6 L72.0 24.9 L71.4 25.4 L70.8 25.2 L70.2 24.8 L69.6 25.4 L69.0 25.0 L68.4 25.5 L67.8 26.2 L67.2 25.6 L66.6 26.1 L66.0 25.1 L65.4 24.6 L64.8 24.7 L64.2 25.7 L63.6 25.1 L63.0 24.9 L62.4 25.4 L61.8 26.3 L61.2 26.1 L60.6 26.1 L60.0 26.1 L59.4 24.5 L58.8 25.0 L58.2 24.4 L57.6 25.0 L57.0 24.7 L56.4 24.7 L55.8 24.9 L55.2 25.5 L54.6 25.1 L54.0 25.4 L53.4 24.5 L52.8 25.3 L52.2 25.3 L51.6 24.9 L51.0 24.1 L50.4 24.9 L49.8 24.1 L49.2 25.3 L48.6 25.2 L48.0 24.8 L47.4 24.9 L46.8 24.7 L46.2 24.4 L45.6 25.0 L45.0 24.4 L44.4 24.3 L43.8 24.6 L43.2 24.7 L42.6 24.3 L42.0 24.6 L41.4 24.1 L40.8 24.7 L40.2 24.3 L39.6 24.3 L39.0 24.3 L38.4 24.5 L37.8 24.5 L37.2 24.7 L36.6 25.4 L36.0 25.2 L35.4 25.0 L34.8 24.9 L34.2 25.6 L33.6 24.4 L33.0 25.2 L32.4 24.9 L31.8 24.9 L31.2 25.0 L30.6 24.8 L30.0 24.2 L29.4 25.8 L28.8 26.1 L28.2 25.1 L27.6 24.7 L27.0 25.1 L26.4 25.5 L25.8 24.8 L25.2 24.9 L24.6 25.6 L24.0 25.8 L23.4 25.2 L22.8 26.0 L22.2 25.1 L21.6 25.1 L21.0 26.2 L20.4 25.3 L19.8 25.3 L19.2 24.6 L18.6 25.3 L18.0 24.6 L17.4 25.6 L16.8 25.2 L16.2 25.1 L15.6 25.0 L15.0 25.2 L14.4 24.8 L13.8 25.9 L13.2 25.4 L12.6 25.8 L12.0 26.3 L11.4 25.5 L10.8 25.6 L10.2 24.3 L9.6 25.8 L9.0 25.6 L8.4 26.3 L7.8 26.4 L7.2 26.1 L6.6 26.0 L6.0 25.9 L5.4 25.9 L4.8 24.1 L4.2 24.3 L3.6 24.2 L3.0 24.1 L2.4 24.0 L1.8 24.1 L1.2 24.1 L0.6 24.3 L0.0 24.3 Z" fill="#79272c"/></svg>
<div class="t" style="left:4.5px;top:3.8px;font-size:6.2px;color:#e3b0b0">Voice/Mic</div>
</div>
<div class="a" style="left:152px;top:129.5px;width:451px;height:47.5px;background:linear-gradient(#3a7aa9,#3d7599 60%,#3e7498);border-radius:3px;overflow:hidden">
<svg class="a" style="left:0;top:0" width="451" height="47.5" viewBox="0 0 451 47.5"><path d="M0.0 20.5 L0.6 18.7 L1.2 20.2 L1.8 17.9 L2.4 18.9 L3.0 20.8 L3.6 18.5 L4.2 17.6 L4.8 19.8 L5.4 16.6 L6.0 17.1 L6.6 20.5 L7.2 18.6 L7.8 16.7 L8.4 20.0 L9.0 20.1 L9.6 18.8 L10.2 19.3 L10.8 19.9 L11.4 17.3 L12.0 17.7 L12.6 17.0 L13.2 18.0 L13.8 18.7 L14.4 20.5 L15.0 18.0 L15.6 17.8 L16.2 19.5 L16.8 19.3 L17.4 17.2 L18.0 20.8 L18.6 18.0 L19.2 18.8 L19.8 18.6 L20.4 19.8 L21.0 18.4 L21.6 19.9 L22.2 19.2 L22.8 19.2 L23.4 19.4 L24.0 20.4 L24.6 17.4 L25.2 17.9 L25.8 17.0 L26.4 19.1 L27.0 16.9 L27.6 17.3 L28.2 19.3 L28.8 17.5 L29.4 20.6 L30.0 18.1 L30.6 17.9 L31.2 20.1 L31.8 19.5 L32.4 20.7 L33.0 17.6 L33.6 18.0 L34.2 19.9 L34.8 18.7 L35.4 20.6 L36.0 17.4 L36.6 17.1 L37.2 18.9 L37.8 17.2 L38.4 18.4 L39.0 17.5 L39.6 17.8 L40.2 20.5 L40.8 18.0 L41.4 18.3 L42.0 19.0 L42.6 17.1 L43.2 20.4 L43.8 20.7 L44.4 20.3 L45.0 18.4 L45.6 18.9 L46.2 19.2 L46.8 20.4 L47.4 19.7 L48.0 19.0 L48.6 18.3 L49.2 18.0 L49.8 20.8 L50.4 20.6 L51.0 20.1 L51.6 19.7 L52.2 19.4 L52.8 19.1 L53.4 17.0 L54.0 18.6 L54.6 16.7 L55.2 18.1 L55.8 17.6 L56.4 19.4 L57.0 18.5 L57.6 20.4 L58.2 16.8 L58.8 19.5 L59.4 20.4 L60.0 20.5 L60.6 18.0 L61.2 18.6 L61.8 18.6 L62.4 19.2 L63.0 19.6 L63.6 20.8 L64.2 20.0 L64.8 17.8 L65.4 19.1 L66.0 19.3 L66.6 18.3 L67.2 20.4 L67.8 18.7 L68.4 17.0 L69.0 18.1 L69.6 17.9 L70.2 17.7 L70.8 19.6 L71.4 19.0 L72.0 17.3 L72.6 16.6 L73.2 19.4 L73.8 19.1 L74.4 18.5 L75.0 19.6 L75.6 17.9 L76.2 20.5 L76.8 18.3 L77.4 19.7 L78.0 18.5 L78.6 17.7 L79.2 20.1 L79.8 20.4 L80.4 20.2 L81.0 19.8 L81.6 17.2 L82.2 19.1 L82.8 19.6 L83.4 19.2 L84.0 19.9 L84.6 20.5 L85.2 16.8 L85.8 20.5 L86.4 20.5 L87.0 17.7 L87.6 20.6 L88.2 20.3 L88.8 18.8 L89.4 19.2 L90.0 17.6 L90.6 18.7 L91.2 20.1 L91.8 18.7 L92.4 17.9 L93.0 17.5 L93.6 21.0 L94.2 20.8 L94.8 18.3 L95.4 20.3 L96.0 17.9 L96.6 18.5 L97.2 17.7 L97.8 19.7 L98.4 19.6 L99.0 17.1 L99.6 20.4 L100.2 17.9 L100.8 19.5 L101.4 20.5 L102.0 17.8 L102.6 20.0 L103.2 16.8 L103.8 19.0 L104.4 17.7 L105.0 20.4 L105.6 19.9 L106.2 19.4 L106.8 18.4 L107.4 18.1 L108.0 20.3 L108.6 18.0 L109.2 18.5 L109.8 18.3 L110.4 19.1 L111.0 17.4 L111.6 17.4 L112.2 17.9 L112.8 19.5 L113.4 18.4 L114.0 18.2 L114.6 17.0 L115.2 17.1 L115.8 16.6 L116.4 17.5 L117.0 17.0 L117.6 20.3 L118.2 19.9 L118.8 17.3 L119.4 20.1 L120.0 18.9 L120.6 20.6 L121.2 19.9 L121.8 17.1 L122.4 17.3 L123.0 20.4 L123.6 19.3 L124.2 18.1 L124.8 18.6 L125.4 19.5 L126.0 19.3 L126.6 19.0 L127.2 20.8 L127.8 18.7 L128.4 18.0 L129.0 16.9 L129.6 19.2 L130.2 18.1 L130.8 18.4 L131.4 19.9 L132.0 17.6 L132.6 18.6 L133.2 19.4 L133.8 18.8 L134.4 19.1 L135.0 18.1 L135.6 16.8 L136.2 18.8 L136.8 16.8 L137.4 16.0 L138.0 16.2 L138.6 19.7 L139.2 16.9 L139.8 15.8 L140.4 16.4 L141.0 18.6 L141.6 17.1 L142.2 18.4 L142.8 17.7 L143.4 17.4 L144.0 18.6 L144.6 15.3 L145.2 18.5 L145.8 15.2 L146.4 14.6 L147.0 16.2 L147.6 12.9 L148.2 14.8 L148.8 16.4 L149.4 13.7 L150.0 15.5 L150.6 17.0 L151.2 18.3 L151.8 15.1 L152.4 14.1 L153.0 17.5 L153.6 16.9 L154.2 15.6 L154.8 16.3 L155.4 16.4 L156.0 13.0 L156.6 16.0 L157.2 13.4 L157.8 14.3 L158.4 15.8 L159.0 13.0 L159.6 15.3 L160.2 16.4 L160.8 12.2 L161.4 12.6 L162.0 16.9 L162.6 14.1 L163.2 13.6 L163.8 16.4 L164.4 8.6 L165.0 11.2 L165.6 7.9 L166.2 7.4 L166.8 9.5 L167.4 14.6 L168.0 9.7 L168.6 12.3 L169.2 15.4 L169.8 15.0 L170.4 7.0 L171.0 13.8 L171.6 14.2 L172.2 10.8 L172.8 11.5 L173.4 11.0 L174.0 8.9 L174.6 9.7 L175.2 13.4 L175.8 12.3 L176.4 13.6 L177.0 11.1 L177.6 15.2 L178.2 6.6 L178.8 8.7 L179.4 8.9 L180.0 8.1 L180.6 11.8 L181.2 9.6 L181.8 8.6 L182.4 12.4 L183.0 7.1 L183.6 8.9 L184.2 8.9 L184.8 6.9 L185.4 5.8 L186.0 12.0 L186.6 14.2 L187.2 9.6 L187.8 13.2 L188.4 9.8 L189.0 8.1 L189.6 7.1 L190.2 6.3 L190.8 9.1 L191.4 6.5 L192.0 11.8 L192.6 13.2 L193.2 12.3 L193.8 16.0 L194.4 11.7 L195.0 15.6 L195.6 15.1 L196.2 13.3 L196.8 9.4 L197.4 12.5 L198.0 15.1 L198.6 9.6 L199.2 7.0 L199.8 10.3 L200.4 9.7 L201.0 15.0 L201.6 7.5 L202.2 10.4 L202.8 13.7 L203.4 16.3 L204.0 14.8 L204.6 14.4 L205.2 8.9 L205.8 11.1 L206.4 8.6 L207.0 10.7 L207.6 9.4 L208.2 7.9 L208.8 14.1 L209.4 12.8 L210.0 8.7 L210.6 9.8 L211.2 13.6 L211.8 12.6 L212.4 7.4 L213.0 7.7 L213.6 12.3 L214.2 9.4 L214.8 10.9 L215.4 8.6 L216.0 15.8 L216.6 12.1 L217.2 15.1 L217.8 15.5 L218.4 10.0 L219.0 13.8 L219.6 10.8 L220.2 16.0 L220.8 7.8 L221.4 11.4 L222.0 11.1 L222.6 12.6 L223.2 14.9 L223.8 9.6 L224.4 15.9 L225.0 15.1 L225.6 13.7 L226.2 13.3 L226.8 15.5 L227.4 16.1 L228.0 14.7 L228.6 13.4 L229.2 8.8 L229.8 12.2 L230.4 10.2 L231.0 10.8 L231.6 11.5 L232.2 10.6 L232.8 14.0 L233.4 7.4 L234.0 8.0 L234.6 9.7 L235.2 9.4 L235.8 11.4 L236.4 14.0 L237.0 10.3 L237.6 15.2 L238.2 7.2 L238.8 11.2 L239.4 11.5 L240.0 7.1 L240.6 14.0 L241.2 12.2 L241.8 9.8 L242.4 9.6 L243.0 16.0 L243.6 12.5 L244.2 9.7 L244.8 7.1 L245.4 7.8 L246.0 10.4 L246.6 15.5 L247.2 12.4 L247.8 11.8 L248.4 9.4 L249.0 13.7 L249.6 12.7 L250.2 13.7 L250.8 14.2 L251.4 8.8 L252.0 15.0 L252.6 7.4 L253.2 7.3 L253.8 14.1 L254.4 7.6 L255.0 15.4 L255.6 13.9 L256.2 9.2 L256.8 11.6 L257.4 12.2 L258.0 13.6 L258.6 13.8 L259.2 12.2 L259.8 11.7 L260.4 10.0 L261.0 10.7 L261.6 8.1 L262.2 7.8 L262.8 10.1 L263.4 11.8 L264.0 12.2 L264.6 11.3 L265.2 7.0 L265.8 6.2 L266.4 11.1 L267.0 14.9 L267.6 8.0 L268.2 10.4 L268.8 7.0 L269.4 7.1 L270.0 7.1 L270.6 11.7 L271.2 5.8 L271.8 11.5 L272.4 7.3 L273.0 10.6 L273.6 14.3 L274.2 8.2 L274.8 5.2 L275.4 6.8 L276.0 11.7 L276.6 12.5 L277.2 13.8 L277.8 5.3 L278.4 8.5 L279.0 4.9 L279.6 10.0 L280.2 7.2 L280.8 6.6 L281.4 4.8 L282.0 9.9 L282.6 12.8 L283.2 13.0 L283.8 7.4 L284.4 8.8 L285.0 7.3 L285.6 5.3 L286.2 14.2 L286.8 12.4 L287.4 5.4 L288.0 6.3 L288.6 10.1 L289.2 11.6 L289.8 10.2 L290.4 15.0 L291.0 13.9 L291.6 9.4 L292.2 11.9 L292.8 7.8 L293.4 9.2 L294.0 8.7 L294.6 7.5 L295.2 7.7 L295.8 9.1 L296.4 15.0 L297.0 6.5 L297.6 9.9 L298.2 5.2 L298.8 8.2 L299.4 7.1 L300.0 10.5 L300.6 12.9 L301.2 8.9 L301.8 13.0 L302.4 13.3 L303.0 10.6 L303.6 9.0 L304.2 13.9 L304.8 10.7 L305.4 6.2 L306.0 13.0 L306.6 9.1 L307.2 13.4 L307.8 9.2 L308.4 6.2 L309.0 12.6 L309.6 14.4 L310.2 11.6 L310.8 12.8 L311.4 13.7 L312.0 14.0 L312.6 12.5 L313.2 7.2 L313.8 10.6 L314.4 10.2 L315.0 9.6 L315.6 14.4 L316.2 10.0 L316.8 8.2 L317.4 9.4 L318.0 10.9 L318.6 11.0 L319.2 9.8 L319.8 7.6 L320.4 15.7 L321.0 7.0 L321.6 12.1 L322.2 7.2 L322.8 16.0 L323.4 11.7 L324.0 15.6 L324.6 9.3 L325.2 14.6 L325.8 12.1 L326.4 11.7 L327.0 11.5 L327.6 8.7 L328.2 11.7 L328.8 12.8 L329.4 8.1 L330.0 9.2 L330.6 11.3 L331.2 12.0 L331.8 15.7 L332.4 11.2 L333.0 11.6 L333.6 13.0 L334.2 9.1 L334.8 16.3 L335.4 16.5 L336.0 15.4 L336.6 15.0 L337.2 15.9 L337.8 10.2 L338.4 15.9 L339.0 12.9 L339.6 15.8 L340.2 15.8 L340.8 12.1 L341.4 15.3 L342.0 8.4 L342.6 9.5 L343.2 7.6 L343.8 10.7 L344.4 9.5 L345.0 10.9 L345.6 7.6 L346.2 15.7 L346.8 13.3 L347.4 10.1 L348.0 11.5 L348.6 13.8 L349.2 12.6 L349.8 15.4 L350.4 10.8 L351.0 15.8 L351.6 9.2 L352.2 10.0 L352.8 15.7 L353.4 13.7 L354.0 9.6 L354.6 8.7 L355.2 8.7 L355.8 11.4 L356.4 8.5 L357.0 10.4 L357.6 13.3 L358.2 15.5 L358.8 14.6 L359.4 15.2 L360.0 10.8 L360.6 15.3 L361.2 11.1 L361.8 7.3 L362.4 12.3 L363.0 12.8 L363.6 8.3 L364.2 12.9 L364.8 11.8 L365.4 11.7 L366.0 13.3 L366.6 9.0 L367.2 12.3 L367.8 13.6 L368.4 14.3 L369.0 11.0 L369.6 7.7 L370.2 6.6 L370.8 6.9 L371.4 12.5 L372.0 7.1 L372.6 8.2 L373.2 14.9 L373.8 9.4 L374.4 15.3 L375.0 6.2 L375.6 15.5 L376.2 15.0 L376.8 10.7 L377.4 6.7 L378.0 13.7 L378.6 9.8 L379.2 12.3 L379.8 6.3 L380.4 6.6 L381.0 14.4 L381.6 7.4 L382.2 10.4 L382.8 5.8 L383.4 14.3 L384.0 6.5 L384.6 14.2 L385.2 11.8 L385.8 9.8 L386.4 10.6 L387.0 9.8 L387.6 11.3 L388.2 10.9 L388.8 11.8 L389.4 10.3 L390.0 9.3 L390.6 13.6 L391.2 9.4 L391.8 15.4 L392.4 14.1 L393.0 5.1 L393.6 12.6 L394.2 9.7 L394.8 13.9 L395.4 5.9 L396.0 8.3 L396.6 15.3 L397.2 7.3 L397.8 7.9 L398.4 14.2 L399.0 14.1 L399.6 14.9 L400.2 10.3 L400.8 12.9 L401.4 15.0 L402.0 4.8 L402.6 7.6 L403.2 9.0 L403.8 4.7 L404.4 10.9 L405.0 5.4 L405.6 5.9 L406.2 9.2 L406.8 8.9 L407.4 12.6 L408.0 12.9 L408.6 7.6 L409.2 7.3 L409.8 5.1 L410.4 9.7 L411.0 6.8 L411.6 9.4 L412.2 8.5 L412.8 9.4 L413.4 14.1 L414.0 4.9 L414.6 14.4 L415.2 5.0 L415.8 7.2 L416.4 14.0 L417.0 13.7 L417.6 9.7 L418.2 8.3 L418.8 12.9 L419.4 15.3 L420.0 12.3 L420.6 8.9 L421.2 13.1 L421.8 6.3 L422.4 9.2 L423.0 6.0 L423.6 11.9 L424.2 11.8 L424.8 9.7 L425.4 6.1 L426.0 13.4 L426.6 14.6 L427.2 13.9 L427.8 7.3 L428.4 6.0 L429.0 7.6 L429.6 12.6 L430.2 9.2 L430.8 15.4 L431.4 7.2 L432.0 6.5 L432.6 5.7 L433.2 24.0 L433.8 24.0 L433.8 24.0 L433.2 24.0 L432.6 37.1 L432.0 34.3 L431.4 32.6 L430.8 33.3 L430.2 41.9 L429.6 37.1 L429.0 34.9 L428.4 42.0 L427.8 33.7 L427.2 35.6 L426.6 36.0 L426.0 36.0 L425.4 40.4 L424.8 41.6 L424.2 41.1 L423.6 38.9 L423.0 39.6 L422.4 42.4 L421.8 42.8 L421.2 41.7 L420.6 37.5 L420.0 42.2 L419.4 41.2 L418.8 42.5 L418.2 38.3 L417.6 35.9 L417.0 33.8 L416.4 39.1 L415.8 41.0 L415.2 32.7 L414.6 38.1 L414.0 37.5 L413.4 43.2 L412.8 43.3 L412.2 35.3 L411.6 37.6 L411.0 34.2 L410.4 37.3 L409.8 35.4 L409.2 37.0 L408.6 37.3 L408.0 33.7 L407.4 36.6 L406.8 33.7 L406.2 38.5 L405.6 39.4 L405.0 34.4 L404.4 37.4 L403.8 41.4 L403.2 36.0 L402.6 37.6 L402.0 33.1 L401.4 34.1 L400.8 33.4 L400.2 35.8 L399.6 38.2 L399.0 36.2 L398.4 38.3 L397.8 37.6 L397.2 42.4 L396.6 33.0 L396.0 40.3 L395.4 35.6 L394.8 35.2 L394.2 42.9 L393.6 36.1 L393.0 35.6 L392.4 39.5 L391.8 41.6 L391.2 36.5 L390.6 36.4 L390.0 40.5 L389.4 42.5 L388.8 34.8 L388.2 36.2 L387.6 41.0 L387.0 41.2 L386.4 32.7 L385.8 41.2 L385.2 39.8 L384.6 42.2 L384.0 40.6 L383.4 34.4 L382.8 36.8 L382.2 37.0 L381.6 34.7 L381.0 32.5 L380.4 42.0 L379.8 41.7 L379.2 38.4 L378.6 36.5 L378.0 40.0 L377.4 33.4 L376.8 38.2 L376.2 40.1 L375.6 36.6 L375.0 35.4 L374.4 32.0 L373.8 38.9 L373.2 34.0 L372.6 34.9 L372.0 41.2 L371.4 36.3 L370.8 36.2 L370.2 34.1 L369.6 39.5 L369.0 38.1 L368.4 37.7 L367.8 37.0 L367.2 38.0 L366.6 35.8 L366.0 35.9 L365.4 32.3 L364.8 34.8 L364.2 37.3 L363.6 32.4 L363.0 34.3 L362.4 34.3 L361.8 35.0 L361.2 33.0 L360.6 35.8 L360.0 35.7 L359.4 40.1 L358.8 38.3 L358.2 34.8 L357.6 35.6 L357.0 39.0 L356.4 38.2 L355.8 35.5 L355.2 32.9 L354.6 34.9 L354.0 39.5 L353.4 35.9 L352.8 39.3 L352.2 36.3 L351.6 34.6 L351.0 37.3 L350.4 35.6 L349.8 39.6 L349.2 40.3 L348.6 37.3 L348.0 35.5 L347.4 33.8 L346.8 35.0 L346.2 33.0 L345.6 38.6 L345.0 37.1 L344.4 34.2 L343.8 34.6 L343.2 36.6 L342.6 39.1 L342.0 33.2 L341.4 37.7 L340.8 37.0 L340.2 39.6 L339.6 31.6 L339.0 37.1 L338.4 37.1 L337.8 39.9 L337.2 33.4 L336.6 38.1 L336.0 38.5 L335.4 34.3 L334.8 37.6 L334.2 37.1 L333.6 37.8 L333.0 38.9 L332.4 39.1 L331.8 35.1 L331.2 40.7 L330.6 40.9 L330.0 39.6 L329.4 39.2 L328.8 32.4 L328.2 37.4 L327.6 38.5 L327.0 40.9 L326.4 39.4 L325.8 38.3 L325.2 38.5 L324.6 35.0 L324.0 35.0 L323.4 38.2 L322.8 34.2 L322.2 34.6 L321.6 34.4 L321.0 41.3 L320.4 36.5 L319.8 36.9 L319.2 33.4 L318.6 36.2 L318.0 40.1 L317.4 36.4 L316.8 33.5 L316.2 37.7 L315.6 32.1 L315.0 35.2 L314.4 36.1 L313.8 38.4 L313.2 34.8 L312.6 37.6 L312.0 40.6 L311.4 40.4 L310.8 36.1 L310.2 41.8 L309.6 35.8 L309.0 41.0 L308.4 40.9 L307.8 34.4 L307.2 41.7 L306.6 39.1 L306.0 32.8 L305.4 33.9 L304.8 35.1 L304.2 37.9 L303.6 42.2 L303.0 39.2 L302.4 34.1 L301.8 39.4 L301.2 41.4 L300.6 37.6 L300.0 40.7 L299.4 36.2 L298.8 40.8 L298.2 35.3 L297.6 40.9 L297.0 36.7 L296.4 35.4 L295.8 34.4 L295.2 34.0 L294.6 35.9 L294.0 33.2 L293.4 35.5 L292.8 42.4 L292.2 40.2 L291.6 39.0 L291.0 43.0 L290.4 38.5 L289.8 39.7 L289.2 36.7 L288.6 36.8 L288.0 35.4 L287.4 40.1 L286.8 43.3 L286.2 39.0 L285.6 35.8 L285.0 38.9 L284.4 39.2 L283.8 33.3 L283.2 34.6 L282.6 35.7 L282.0 37.2 L281.4 43.1 L280.8 37.1 L280.2 34.3 L279.6 42.4 L279.0 38.3 L278.4 38.4 L277.8 34.9 L277.2 38.6 L276.6 41.1 L276.0 35.2 L275.4 43.1 L274.8 37.7 L274.2 42.4 L273.6 35.6 L273.0 42.9 L272.4 35.7 L271.8 41.0 L271.2 34.7 L270.6 42.7 L270.0 36.7 L269.4 42.4 L268.8 37.1 L268.2 35.5 L267.6 35.4 L267.0 40.9 L266.4 39.3 L265.8 40.9 L265.2 40.5 L264.6 39.3 L264.0 33.6 L263.4 37.7 L262.8 35.1 L262.2 42.5 L261.6 36.6 L261.0 33.3 L260.4 40.6 L259.8 39.1 L259.2 33.5 L258.6 33.5 L258.0 37.5 L257.4 39.1 L256.8 42.0 L256.2 36.8 L255.6 38.1 L255.0 33.9 L254.4 36.9 L253.8 36.2 L253.2 38.2 L252.6 36.9 L252.0 41.6 L251.4 38.8 L250.8 38.0 L250.2 39.7 L249.6 39.9 L249.0 33.8 L248.4 41.4 L247.8 32.5 L247.2 35.3 L246.6 35.5 L246.0 40.6 L245.4 36.7 L244.8 38.0 L244.2 41.4 L243.6 33.7 L243.0 34.6 L242.4 35.9 L241.8 34.3 L241.2 38.3 L240.6 35.8 L240.0 39.1 L239.4 37.0 L238.8 38.3 L238.2 33.6 L237.6 34.4 L237.0 37.5 L236.4 39.7 L235.8 33.9 L235.2 35.6 L234.6 34.1 L234.0 32.5 L233.4 36.5 L232.8 37.8 L232.2 40.1 L231.6 38.5 L231.0 38.4 L230.4 34.4 L229.8 38.6 L229.2 37.5 L228.6 34.2 L228.0 33.7 L227.4 32.2 L226.8 36.3 L226.2 36.4 L225.6 33.8 L225.0 35.2 L224.4 39.7 L223.8 33.5 L223.2 34.1 L222.6 38.2 L222.0 35.0 L221.4 34.7 L220.8 35.4 L220.2 40.1 L219.6 37.1 L219.0 32.7 L218.4 31.7 L217.8 38.7 L217.2 36.4 L216.6 39.7 L216.0 37.9 L215.4 39.7 L214.8 40.4 L214.2 33.2 L213.6 37.8 L213.0 39.8 L212.4 32.2 L211.8 39.5 L211.2 34.3 L210.6 33.7 L210.0 38.4 L209.4 38.8 L208.8 33.5 L208.2 34.4 L207.6 32.4 L207.0 33.1 L206.4 39.4 L205.8 36.7 L205.2 33.2 L204.6 31.8 L204.0 34.9 L203.4 34.8 L202.8 39.0 L202.2 39.3 L201.6 35.0 L201.0 35.0 L200.4 39.7 L199.8 34.7 L199.2 34.2 L198.6 39.7 L198.0 35.1 L197.4 38.8 L196.8 35.8 L196.2 36.1 L195.6 36.8 L195.0 38.0 L194.4 39.3 L193.8 32.8 L193.2 33.3 L192.6 33.2 L192.0 38.5 L191.4 38.4 L190.8 37.1 L190.2 37.0 L189.6 40.2 L189.0 40.7 L188.4 39.5 L187.8 40.0 L187.2 34.9 L186.6 36.1 L186.0 42.0 L185.4 35.5 L184.8 34.7 L184.2 42.0 L183.6 40.1 L183.0 33.8 L182.4 41.3 L181.8 37.2 L181.2 40.8 L180.6 35.2 L180.0 37.8 L179.4 37.0 L178.8 34.8 L178.2 35.9 L177.6 34.7 L177.0 34.5 L176.4 42.0 L175.8 35.9 L175.2 37.7 L174.6 36.3 L174.0 37.5 L173.4 39.8 L172.8 41.6 L172.2 35.0 L171.6 39.6 L171.0 35.9 L170.4 40.6 L169.8 35.3 L169.2 34.9 L168.6 39.7 L168.0 38.2 L167.4 35.0 L166.8 36.7 L166.2 38.9 L165.6 32.3 L165.0 33.1 L164.4 38.4 L163.8 35.8 L163.2 38.2 L162.6 39.1 L162.0 33.7 L161.4 36.6 L160.8 37.8 L160.2 32.5 L159.6 35.7 L159.0 31.4 L158.4 36.2 L157.8 36.5 L157.2 31.3 L156.6 31.2 L156.0 36.7 L155.4 31.3 L154.8 30.5 L154.2 32.4 L153.6 35.7 L153.0 33.4 L152.4 33.9 L151.8 31.2 L151.2 34.0 L150.6 34.9 L150.0 32.9 L149.4 33.5 L148.8 31.5 L148.2 33.2 L147.6 31.5 L147.0 32.1 L146.4 32.6 L145.8 29.0 L145.2 34.0 L144.6 31.1 L144.0 29.0 L143.4 29.6 L142.8 32.0 L142.2 32.1 L141.6 32.1 L141.0 29.3 L140.4 29.6 L139.8 29.4 L139.2 28.7 L138.6 29.4 L138.0 32.0 L137.4 28.7 L136.8 31.2 L136.2 28.7 L135.6 30.7 L135.0 30.3 L134.4 29.9 L133.8 29.1 L133.2 30.4 L132.6 27.6 L132.0 30.7 L131.4 28.3 L130.8 31.3 L130.2 29.6 L129.6 27.3 L129.0 28.7 L128.4 30.0 L127.8 30.2 L127.2 30.1 L126.6 28.7 L126.0 27.9 L125.4 28.3 L124.8 27.9 L124.2 29.9 L123.6 29.5 L123.0 28.1 L122.4 29.2 L121.8 29.3 L121.2 27.7 L120.6 30.0 L120.0 29.7 L119.4 27.5 L118.8 28.9 L118.2 29.6 L117.6 29.0 L117.0 28.9 L116.4 30.4 L115.8 29.6 L115.2 28.2 L114.6 29.4 L114.0 27.9 L113.4 30.2 L112.8 29.5 L112.2 27.2 L111.6 30.6 L111.0 28.5 L110.4 30.3 L109.8 30.2 L109.2 27.8 L108.6 30.4 L108.0 30.3 L107.4 29.0 L106.8 27.9 L106.2 29.3 L105.6 27.4 L105.0 30.6 L104.4 29.5 L103.8 30.2 L103.2 29.6 L102.6 27.8 L102.0 30.1 L101.4 29.4 L100.8 27.6 L100.2 28.1 L99.6 29.4 L99.0 27.6 L98.4 29.8 L97.8 28.6 L97.2 28.5 L96.6 28.9 L96.0 29.4 L95.4 27.2 L94.8 29.7 L94.2 30.2 L93.6 29.1 L93.0 30.3 L92.4 30.3 L91.8 28.0 L91.2 28.8 L90.6 27.4 L90.0 30.5 L89.4 27.8 L88.8 31.0 L88.2 28.6 L87.6 29.6 L87.0 28.4 L86.4 29.9 L85.8 29.4 L85.2 30.3 L84.6 30.7 L84.0 31.2 L83.4 28.4 L82.8 28.0 L82.2 29.7 L81.6 29.0 L81.0 28.6 L80.4 29.3 L79.8 29.6 L79.2 30.1 L78.6 28.1 L78.0 27.9 L77.4 29.4 L76.8 27.9 L76.2 30.8 L75.6 29.0 L75.0 30.9 L74.4 27.6 L73.8 27.9 L73.2 28.6 L72.6 27.4 L72.0 31.3 L71.4 29.9 L70.8 31.2 L70.2 30.2 L69.6 30.9 L69.0 30.5 L68.4 30.5 L67.8 30.2 L67.2 29.2 L66.6 31.0 L66.0 29.1 L65.4 28.1 L64.8 29.8 L64.2 29.7 L63.6 28.6 L63.0 27.8 L62.4 28.4 L61.8 28.6 L61.2 27.1 L60.6 28.8 L60.0 30.3 L59.4 27.5 L58.8 31.2 L58.2 28.7 L57.6 30.6 L57.0 29.6 L56.4 30.2 L55.8 31.4 L55.2 29.5 L54.6 27.8 L54.0 29.6 L53.4 28.6 L52.8 28.6 L52.2 27.5 L51.6 30.1 L51.0 30.1 L50.4 30.2 L49.8 28.9 L49.2 30.1 L48.6 30.3 L48.0 27.2 L47.4 29.5 L46.8 27.6 L46.2 27.8 L45.6 28.3 L45.0 27.6 L44.4 30.5 L43.8 29.0 L43.2 27.6 L42.6 27.8 L42.0 31.2 L41.4 28.4 L40.8 30.8 L40.2 29.8 L39.6 31.3 L39.0 27.4 L38.4 28.5 L37.8 28.6 L37.2 29.7 L36.6 29.7 L36.0 30.5 L35.4 28.1 L34.8 30.1 L34.2 30.9 L33.6 28.9 L33.0 30.7 L32.4 28.3 L31.8 27.6 L31.2 28.0 L30.6 27.2 L30.0 28.9 L29.4 30.2 L28.8 27.8 L28.2 28.2 L27.6 29.2 L27.0 29.6 L26.4 31.3 L25.8 31.2 L25.2 30.1 L24.6 28.9 L24.0 30.7 L23.4 27.8 L22.8 29.8 L22.2 31.2 L21.6 28.0 L21.0 29.8 L20.4 29.7 L19.8 30.2 L19.2 29.1 L18.6 31.0 L18.0 27.5 L17.4 28.5 L16.8 28.4 L16.2 28.3 L15.6 30.1 L15.0 27.7 L14.4 28.8 L13.8 29.9 L13.2 30.1 L12.6 30.7 L12.0 28.1 L11.4 28.2 L10.8 27.4 L10.2 29.3 L9.6 29.6 L9.0 31.2 L8.4 30.7 L7.8 28.9 L7.2 27.8 L6.6 28.7 L6.0 29.9 L5.4 30.3 L4.8 27.5 L4.2 28.2 L3.6 27.5 L3.0 28.6 L2.4 28.0 L1.8 29.0 L1.2 30.0 L0.6 28.7 L0.0 29.4 Z" fill="#25516e"/></svg>
<div class="t" style="left:4.5px;top:3.8px;font-size:6.2px;color:#a5c6dd">audio file.mp3</div>
</div>
<div class="a" style="left:204px;top:181.5px;width:88.5px;height:47.5px;background:#5c6298;border-radius:3px;overflow:hidden">
<svg class="a" style="left:0;top:0" width="88.5" height="47.5" viewBox="0 0 88.5 47.5"><path d="M0.0 23.3 L0.6 23.1 L1.2 23.2 L1.8 23.2 L2.4 23.2 L3.0 23.0 L3.6 23.0 L4.2 23.1 L4.8 23.2 L5.4 22.8 L6.0 23.2 L6.6 23.1 L7.2 23.2 L7.8 23.0 L8.4 22.8 L9.0 23.1 L9.6 22.9 L10.2 23.2 L10.8 22.9 L11.4 23.2 L12.0 22.9 L12.6 23.0 L13.2 23.2 L13.8 23.1 L14.4 23.0 L15.0 22.8 L15.6 22.8 L16.2 23.1 L16.8 23.0 L17.4 23.0 L18.0 23.2 L18.6 23.0 L19.2 23.2 L19.8 22.8 L20.4 22.8 L21.0 23.1 L21.6 23.1 L22.2 23.0 L22.8 23.2 L23.4 23.2 L24.0 23.1 L24.6 22.9 L25.2 23.0 L25.8 23.1 L26.4 23.0 L27.0 23.2 L27.6 23.2 L28.2 23.0 L28.8 22.9 L29.4 22.9 L30.0 23.1 L30.6 23.1 L31.2 23.1 L31.8 22.9 L32.4 22.7 L33.0 22.2 L33.6 20.2 L34.2 21.4 L34.8 19.3 L35.4 18.3 L36.0 19.5 L36.6 19.8 L37.2 20.1 L37.8 21.6 L38.4 20.4 L39.0 20.2 L39.6 21.2 L40.2 21.0 L40.8 20.7 L41.4 20.1 L42.0 18.9 L42.6 21.1 L43.2 20.4 L43.8 22.5 L44.4 21.8 L45.0 23.0 L45.6 22.9 L46.2 22.0 L46.8 22.4 L47.4 21.8 L48.0 21.3 L48.6 21.7 L49.2 19.6 L49.8 19.9 L50.4 20.7 L51.0 21.6 L51.6 21.2 L52.2 22.2 L52.8 21.8 L53.4 22.4 L54.0 22.4 L54.6 22.7 L55.2 23.0 L55.8 23.0 L56.4 23.2 L57.0 23.2 L57.6 23.0 L58.2 23.0 L58.8 22.9 L59.4 23.1 L60.0 23.0 L60.6 23.1 L61.2 23.2 L61.8 23.2 L62.4 23.0 L63.0 22.8 L63.6 23.2 L64.2 23.0 L64.8 23.2 L65.4 23.1 L66.0 23.1 L66.6 23.1 L67.2 23.2 L67.8 22.7 L68.4 22.3 L69.0 21.0 L69.6 20.7 L70.2 21.6 L70.8 19.1 L71.4 19.8 L72.0 20.5 L72.6 20.3 L73.2 19.7 L73.8 21.9 L74.4 21.4 L75.0 21.2 L75.6 21.7 L76.2 22.3 L76.8 22.9 L77.4 23.1 L78.0 23.0 L78.6 22.9 L79.2 23.1 L79.8 23.1 L80.4 23.1 L81.0 23.1 L81.6 23.0 L82.2 23.2 L82.8 23.2 L83.4 23.2 L84.0 23.2 L84.6 23.1 L85.2 23.1 L85.8 23.2 L86.4 23.0 L87.0 23.1 L87.6 23.1 L88.2 23.0 L88.2 23.9 L87.6 23.8 L87.0 24.0 L86.4 24.0 L85.8 24.1 L85.2 23.8 L84.6 24.1 L84.0 24.1 L83.4 24.1 L82.8 24.2 L82.2 23.8 L81.6 23.9 L81.0 23.9 L80.4 23.9 L79.8 24.2 L79.2 23.8 L78.6 23.8 L78.0 24.1 L77.4 23.8 L76.8 24.2 L76.2 24.3 L75.6 25.1 L75.0 25.6 L74.4 25.5 L73.8 26.9 L73.2 27.8 L72.6 28.6 L72.0 26.7 L71.4 28.5 L70.8 25.3 L70.2 25.2 L69.6 25.4 L69.0 25.8 L68.4 25.0 L67.8 24.3 L67.2 24.2 L66.6 23.8 L66.0 24.0 L65.4 23.8 L64.8 23.8 L64.2 24.2 L63.6 23.8 L63.0 24.1 L62.4 23.9 L61.8 24.2 L61.2 24.1 L60.6 24.1 L60.0 23.8 L59.4 24.0 L58.8 23.9 L58.2 24.0 L57.6 24.2 L57.0 23.9 L56.4 24.0 L55.8 23.9 L55.2 24.1 L54.6 24.0 L54.0 24.4 L53.4 25.5 L52.8 25.9 L52.2 24.8 L51.6 26.3 L51.0 26.8 L50.4 25.9 L49.8 28.7 L49.2 26.8 L48.6 25.8 L48.0 26.8 L47.4 26.0 L46.8 24.6 L46.2 24.5 L45.6 24.2 L45.0 24.5 L44.4 24.4 L43.8 25.5 L43.2 26.8 L42.6 27.6 L42.0 27.5 L41.4 27.4 L40.8 27.2 L40.2 27.2 L39.6 28.2 L39.0 26.4 L38.4 27.1 L37.8 27.4 L37.2 25.7 L36.6 28.2 L36.0 28.3 L35.4 26.9 L34.8 27.1 L34.2 26.4 L33.6 25.5 L33.0 24.8 L32.4 25.0 L31.8 24.8 L31.2 23.8 L30.6 23.9 L30.0 23.7 L29.4 24.2 L28.8 23.8 L28.2 24.2 L27.6 24.1 L27.0 23.8 L26.4 24.0 L25.8 23.9 L25.2 24.1 L24.6 23.9 L24.0 24.1 L23.4 23.8 L22.8 24.2 L22.2 23.8 L21.6 24.1 L21.0 24.1 L20.4 23.8 L19.8 24.0 L19.2 23.9 L18.6 24.1 L18.0 24.2 L17.4 23.8 L16.8 24.0 L16.2 23.8 L15.6 24.1 L15.0 24.2 L14.4 24.1 L13.8 23.9 L13.2 23.9 L12.6 23.8 L12.0 23.8 L11.4 24.1 L10.8 24.0 L10.2 24.1 L9.6 24.2 L9.0 23.8 L8.4 24.1 L7.8 24.0 L7.2 23.8 L6.6 24.2 L6.0 23.9 L5.4 23.9 L4.8 23.8 L4.2 24.2 L3.6 23.9 L3.0 23.8 L2.4 24.1 L1.8 24.1 L1.2 23.8 L0.6 24.0 L0.0 23.8 Z" fill="#383c70"/></svg>
<div class="t" style="left:4.5px;top:3.8px;font-size:6.2px;color:#b9bce2">Voice/Mic 2</div>
</div>
<div class="a" style="left:151.5px;top:233px;width:124.5px;height:47.5px;background:#8d4789;border-radius:3px;overflow:hidden">
<svg class="a" style="left:0;top:0" width="124.5" height="47.5" viewBox="0 0 124.5 47.5"><rect x="12" y="25" width="8" height="1.3" fill="#662a66" opacity="0.8"/><rect x="24" y="25" width="8" height="1.3" fill="#662a66" opacity="0.8"/><rect x="12" y="30" width="8" height="1.3" fill="#662a66" opacity="0.8"/><rect x="24" y="30" width="8" height="1.3" fill="#662a66" opacity="0.8"/><rect x="34" y="33" width="15" height="1.3" fill="#662a66" opacity="0.8"/><rect x="75" y="42" width="8" height="1.3" fill="#662a66" opacity="0.8"/><rect x="97" y="42" width="8" height="1.3" fill="#662a66" opacity="0.8"/><rect x="108" y="30" width="7" height="1.3" fill="#662a66" opacity="0.8"/><rect x="108" y="38" width="7" height="1.3" fill="#662a66" opacity="0.8"/><rect x="54.0" y="4.8" width="2" height="1.2" fill="#662a66" opacity="0.75"/><rect x="57.5" y="4.8" width="2.5" height="1.2" fill="#662a66" opacity="0.75"/><rect x="62.0" y="4.8" width="3" height="1.2" fill="#662a66" opacity="0.75"/><rect x="66.5" y="4.8" width="1.5" height="1.2" fill="#662a66" opacity="0.75"/><rect x="70.5" y="4.8" width="3" height="1.2" fill="#662a66" opacity="0.75"/><rect x="75.5" y="4.8" width="3" height="1.2" fill="#662a66" opacity="0.75"/><rect x="79.5" y="4.8" width="2" height="1.2" fill="#662a66" opacity="0.75"/><rect x="84.0" y="4.8" width="3" height="1.2" fill="#662a66" opacity="0.75"/><rect x="88.5" y="4.8" width="3" height="1.2" fill="#662a66" opacity="0.75"/><rect x="97.5" y="4.8" width="8" height="1.2" fill="#662a66" opacity="0.75"/><rect x="55.5" y="8" width="3" height="1.2" fill="#662a66" opacity="0.75"/><rect x="62.5" y="8" width="3" height="1.2" fill="#662a66" opacity="0.75"/><rect x="67.5" y="8" width="2" height="1.2" fill="#662a66" opacity="0.75"/><rect x="72.5" y="8" width="1.5" height="1.2" fill="#662a66" opacity="0.75"/><rect x="76.5" y="8" width="2.5" height="1.2" fill="#662a66" opacity="0.75"/><rect x="80.5" y="8" width="3" height="1.2" fill="#662a66" opacity="0.75"/><rect x="85.5" y="8" width="3" height="1.2" fill="#662a66" opacity="0.75"/><rect x="98.0" y="8" width="7" height="1.2" fill="#662a66" opacity="0.75"/></svg>
<div class="a" style="left:2.8px;top:3.4px;width:31px;height:7px;padding:0 0 0 2.2px;background:#66245f;border-radius:3px;font-size:6px;letter-spacing:-0.15px;line-height:7px;color:#ead4ea;white-space:nowrap">Instrument</div>
</div>
<svg class="a" style="left:152px;top:77px;" width="451" height="208" viewBox="0 0 451 208"><path d="M0 16.8 H315.6 L377.8 27.2 H451" stroke="#fff" stroke-opacity="0.82" stroke-width="1.6" fill="none"/><circle cx="315.6" cy="16.8" r="2.4" fill="#fff"/><circle cx="377.8" cy="27.2" r="2.4" fill="#fff"/><path d="M0 68.5 H451" stroke="#fff" stroke-opacity="0.82" stroke-width="1.6" fill="none"/><circle cx="195" cy="68.5" r="2.4" fill="#fff"/><path d="M0 120.5 H451" stroke="#fff" stroke-opacity="0.82" stroke-width="1.6" fill="none"/><path d="M0 172.6 H37.2 L119.2 177 H451" stroke="#fff" stroke-opacity="0.82" stroke-width="1.6" fill="none"/><circle cx="37.2" cy="172.6" r="2.3" fill="#fff"/><circle cx="119.2" cy="177" r="2.3" fill="#fff"/></svg>
<div class="a" style="left:235.5px;top:77px;width:1.3px;height:216px;background:rgba(240,243,247,0.65);"></div>
<svg class="a" style="left:231px;top:67px;" width="11" height="10" viewBox="0 0 11 10"><path d="M0.8 0.8 H10.2 L5.5 8.5 Z" fill="#ffffff" stroke="#8d9096" stroke-width="1"/></svg>
<div class="a" style="left:0px;top:293px;width:608px;height:181px;background:#343a41;"></div>
<div class="a" style="left:0px;top:293px;width:608px;height:19px;background:#30353c;"></div>
<div class="a" style="left:0px;top:454px;width:608px;height:20px;background:#31363d;"></div>
<svg class="a" style="left:8px;top:301px;" width="8" height="7" viewBox="0 0 8 7"><path d="M0.8 0.5 L7.2 6.5 M7.2 0.5 L0.8 6.5" stroke="#eceef0" stroke-width="1.5"/></svg>
<div class="t" style="left:22.5px;top:301px;font-size:7.6px;color:#dfe2e5;">Instrument</div>
<div class="t" style="left:6.3px;top:324.5px;font-size:7.6px;color:#cfd3d8;">Instrument</div>
<div class="a" style="left:6px;top:337px;width:131px;height:13.5px;background:#202328;border-radius:1px"></div>
<div class="t" style="left:12.3px;top:341px;font-size:7.5px;color:#e3e5e8;">Grand Piano</div>
<svg class="a" style="left:130.5px;top:342px;" width="4" height="3.5" viewBox="0 0 4 3.5"><path d="M0 0h3.5L1.75 3.5z" fill="#e3e5e8"/></svg>
<div class="t" style="left:6.3px;top:361px;font-size:7.6px;color:#cfd3d8;">MIDI Device</div>
<div class="a" style="left:6px;top:373px;width:131px;height:13.5px;background:#202328;border-radius:1px"></div>
<div class="t" style="left:12.3px;top:377.5px;font-size:7.5px;color:#e3e5e8;">No MIDI Device</div>
<svg class="a" style="left:130.5px;top:378.5px;" width="4" height="3.5" viewBox="0 0 4 3.5"><path d="M0 0h3.5L1.75 3.5z" fill="#e3e5e8"/></svg>
<div class="a" style="left:145px;top:315.5px;width:390.5px;height:137.5px;background:#1d2025;"></div>
<div class="a" style="left:155.5px;top:319px;width:369.5px;height:131.5px;background:#30353c;"></div>
<div class="a" style="left:155.5px;top:334.2px;width:369.5px;height:1px;background:#272b31;"></div>
<svg class="a" style="left:163px;top:323px;" width="9" height="8" viewBox="0 0 9 8"><rect x="0.5" y="0.5" width="8" height="7" rx="1" fill="#e4e6e9"/><rect x="0.5" y="5" width="8" height="2.5" fill="#9ea2a8"/></svg>
<div class="t" style="left:177.8px;top:323px;font-size:7.5px;color:#dfe2e5;">Grand Piano</div>
<div class="a" style="left:158px;top:337.5px;width:63px;height:14px;background:#23262b;border-radius:2px"></div>
<div class="t" style="left:163.5px;top:340.5px;font-size:8px;color:#e3e5e8;">-</div>
<div class="t" style="left:172.5px;top:340.5px;font-size:7.6px;color:#e3e5e8;">Octave</div>
<div class="a" style="left:197.5px;top:338.5px;width:10px;height:10px;background:#1c352d;border-radius:50%"></div>
<div class="t" style="left:200.3px;top:340.5px;font-size:7.6px;color:#237a52;">2</div>
<div class="t" style="left:211.5px;top:340.5px;font-size:7.6px;color:#e3e5e8;">+</div>
<div class="a" style="left:225.5px;top:337.5px;width:43px;height:14px;background:#23262b;border-radius:2px"></div>
<svg class="a" style="left:231px;top:341px;" width="5" height="6" viewBox="0 0 5 6"><path d="M2.5 0.5 L4.5 2.9 H3.4 V5.4 H1.6 V2.9 H0.5 Z" fill="none" stroke="#e3e5e8" stroke-width="0.8"/></svg>
<div class="t" style="left:239.5px;top:340.5px;font-size:7.6px;color:#e3e5e8;">Sustain</div>
<div class="a" style="left:275px;top:337.5px;width:22.5px;height:14px;background:#23262b;border-radius:2px"></div>
<div class="t" style="left:281px;top:340.5px;font-size:7.6px;color:#e3e5e8;">C</div>
<svg class="a" style="left:290.5px;top:342.5px;" width="4" height="3.5" viewBox="0 0 4 3.5"><path d="M0 0h3.5L1.75 3.5z" fill="#e3e5e8"/></svg>
<div class="a" style="left:304px;top:337.5px;width:28.5px;height:14px;background:#23262b;border-radius:2px"></div>
<div class="t" style="left:310px;top:340.5px;font-size:7.6px;color:#e3e5e8;">Off</div>
<svg class="a" style="left:325.5px;top:342.5px;" width="4" height="3.5" viewBox="0 0 4 3.5"><path d="M0 0h3.5L1.75 3.5z" fill="#e3e5e8"/></svg>
<div class="a" style="left:494px;top:336.5px;width:29px;height:15px;background:#23262b;border-radius:2px"></div>
<div class="t" style="left:500px;top:340.5px;font-size:7.3px;color:#e3e5e8;">Pitch</div>
<div class="a" style="left:156px;top:353px;width:368px;height:98px;background:#1d2025;"></div>
<div class="a" style="left:158.1px;top:354px;width:18.1px;height:93px;background:#e7e7e8;border-radius:0 0 1.5px 1.5px"></div>
<div class="a" style="left:162.3px;top:432.7px;width:10px;height:9.9px;background:#d3d6da;border-radius:1.5px"></div>
<div class="t" style="left:167.3px;top:435.3px;font-size:6.6px;color:#5a5f66;transform:translateX(-50%)">Z</div>
<div class="a" style="left:177.3px;top:354px;width:18.1px;height:93px;background:#e7e7e8;border-radius:0 0 1.5px 1.5px"></div>
<div class="a" style="left:181.5px;top:432.7px;width:10px;height:9.9px;background:#d3d6da;border-radius:1.5px"></div>
<div class="t" style="left:186.5px;top:435.3px;font-size:6.6px;color:#5a5f66;transform:translateX(-50%)">X</div>
<div class="a" style="left:196.5px;top:354px;width:18.1px;height:93px;background:#e7e7e8;border-radius:0 0 1.5px 1.5px"></div>
<div class="a" style="left:200.7px;top:432.7px;width:10px;height:9.9px;background:#d3d6da;border-radius:1.5px"></div>
<div class="t" style="left:205.7px;top:435.3px;font-size:6.6px;color:#5a5f66;transform:translateX(-50%)">C</div>
<div class="a" style="left:215.7px;top:354px;width:18.1px;height:93px;background:#e7e7e8;border-radius:0 0 1.5px 1.5px"></div>
<div class="a" style="left:219.9px;top:432.7px;width:10px;height:9.9px;background:#d3d6da;border-radius:1.5px"></div>
<div class="t" style="left:224.9px;top:435.3px;font-size:6.6px;color:#5a5f66;transform:translateX(-50%)">V</div>
<div class="a" style="left:234.9px;top:354px;width:18.1px;height:93px;background:#e7e7e8;border-radius:0 0 1.5px 1.5px"></div>
<div class="a" style="left:239.1px;top:432.7px;width:10px;height:9.9px;background:#d3d6da;border-radius:1.5px"></div>
<div class="t" style="left:244.1px;top:435.3px;font-size:6.6px;color:#5a5f66;transform:translateX(-50%)">B</div>
<div class="a" style="left:254.1px;top:354px;width:18.1px;height:93px;background:#e7e7e8;border-radius:0 0 1.5px 1.5px"></div>
<div class="a" style="left:258.3px;top:432.7px;width:10px;height:9.9px;background:#d3d6da;border-radius:1.5px"></div>
<div class="t" style="left:263.3px;top:435.3px;font-size:6.6px;color:#5a5f66;transform:translateX(-50%)">N</div>
<div class="a" style="left:273.3px;top:354px;width:18.1px;height:93px;background:#e7e7e8;border-radius:0 0 1.5px 1.5px"></div>
<div class="a" style="left:277.5px;top:432.7px;width:10px;height:9.9px;background:#d3d6da;border-radius:1.5px"></div>
<div class="t" style="left:282.5px;top:435.3px;font-size:6.6px;color:#5a5f66;transform:translateX(-50%)">M</div>
<div class="a" style="left:292.5px;top:354px;width:18.1px;height:93px;background:#e7e7e8;border-radius:0 0 1.5px 1.5px"></div>
<div class="a" style="left:296.7px;top:432.7px;width:10px;height:9.9px;background:#d3d6da;border-radius:1.5px"></div>
<div class="t" style="left:301.7px;top:435.3px;font-size:6.6px;color:#5a5f66;transform:translateX(-50%)">,</div>
<div class="a" style="left:311.7px;top:354px;width:18.1px;height:93px;background:#e7e7e8;border-radius:0 0 1.5px 1.5px"></div>
<div class="a" style="left:315.9px;top:432.7px;width:10px;height:9.9px;background:#d3d6da;border-radius:1.5px"></div>
<div class="t" style="left:320.9px;top:435.3px;font-size:6.6px;color:#5a5f66;transform:translateX(-50%)">.</div>
<div class="a" style="left:330.9px;top:354px;width:18.1px;height:93px;background:#e7e7e8;border-radius:0 0 1.5px 1.5px"></div>
<div class="a" style="left:335.1px;top:432.7px;width:10px;height:9.9px;background:#d3d6da;border-radius:1.5px"></div>
<div class="t" style="left:340.1px;top:435.3px;font-size:6.6px;color:#5a5f66;transform:translateX(-50%)">Q</div>
<div class="a" style="left:350.1px;top:354px;width:18.1px;height:93px;background:#e7e7e8;border-radius:0 0 1.5px 1.5px"></div>
<div class="a" style="left:354.3px;top:432.7px;width:10px;height:9.9px;background:#d3d6da;border-radius:1.5px"></div>
<div class="t" style="left:359.3px;top:435.3px;font-size:6.6px;color:#5a5f66;transform:translateX(-50%)">W</div>
<div class="a" style="left:369.3px;top:354px;width:18.1px;height:93px;background:#e7e7e8;border-radius:0 0 1.5px 1.5px"></div>
<div class="a" style="left:373.5px;top:432.7px;width:10px;height:9.9px;background:#d3d6da;border-radius:1.5px"></div>
<div class="t" style="left:378.5px;top:435.3px;font-size:6.6px;color:#5a5f66;transform:translateX(-50%)">E</div>
<div class="a" style="left:388.5px;top:354px;width:18.1px;height:93px;background:#e7e7e8;border-radius:0 0 1.5px 1.5px"></div>
<div class="a" style="left:392.7px;top:432.7px;width:10px;height:9.9px;background:#d3d6da;border-radius:1.5px"></div>
<div class="t" style="left:397.7px;top:435.3px;font-size:6.6px;color:#5a5f66;transform:translateX(-50%)">R</div>
<div class="a" style="left:407.7px;top:354px;width:18.1px;height:93px;background:#e7e7e8;border-radius:0 0 1.5px 1.5px"></div>
<div class="a" style="left:411.9px;top:432.7px;width:10px;height:9.9px;background:#d3d6da;border-radius:1.5px"></div>
<div class="t" style="left:416.9px;top:435.3px;font-size:6.6px;color:#5a5f66;transform:translateX(-50%)">T</div>
<div class="a" style="left:426.9px;top:354px;width:18.1px;height:93px;background:#e7e7e8;border-radius:0 0 1.5px 1.5px"></div>
<div class="a" style="left:431.1px;top:432.7px;width:10px;height:9.9px;background:#d3d6da;border-radius:1.5px"></div>
<div class="t" style="left:436.1px;top:435.3px;font-size:6.6px;color:#5a5f66;transform:translateX(-50%)">Y</div>
<div class="a" style="left:446.1px;top:354px;width:18.1px;height:93px;background:#e7e7e8;border-radius:0 0 1.5px 1.5px"></div>
<div class="a" style="left:450.3px;top:432.7px;width:10px;height:9.9px;background:#d3d6da;border-radius:1.5px"></div>
<div class="t" style="left:455.3px;top:435.3px;font-size:6.6px;color:#5a5f66;transform:translateX(-50%)">U</div>
<div class="a" style="left:465.3px;top:354px;width:18.1px;height:93px;background:#e7e7e8;border-radius:0 0 1.5px 1.5px"></div>
<div class="a" style="left:469.5px;top:432.7px;width:10px;height:9.9px;background:#d3d6da;border-radius:1.5px"></div>
<div class="t" style="left:474.5px;top:435.3px;font-size:6.6px;color:#5a5f66;transform:translateX(-50%)">I</div>
<div class="a" style="left:484.5px;top:354px;width:18.1px;height:93px;background:#e7e7e8;border-radius:0 0 1.5px 1.5px"></div>
<div class="a" style="left:488.7px;top:432.7px;width:10px;height:9.9px;background:#d3d6da;border-radius:1.5px"></div>
<div class="t" style="left:493.7px;top:435.3px;font-size:6.6px;color:#5a5f66;transform:translateX(-50%)">O</div>
<div class="a" style="left:503.7px;top:354px;width:18.1px;height:93px;background:#e7e7e8;border-radius:0 0 1.5px 1.5px"></div>
<div class="a" style="left:507.9px;top:432.7px;width:10px;height:9.9px;background:#d3d6da;border-radius:1.5px"></div>
<div class="t" style="left:512.9px;top:435.3px;font-size:6.6px;color:#5a5f66;transform:translateX(-50%)">P</div>
<div class="a" style="left:170.75px;top:354px;width:12px;height:62.8px;background:#24272c;border-radius:0 0 2px 2px"></div>
<div class="a" style="left:172.25px;top:405.5px;width:9px;height:9.5px;background:#3c4047;border-radius:1.5px"></div>
<div class="t" style="left:176.75px;top:407.8px;font-size:6.5px;color:#c9ccd1;transform:translateX(-50%)">S</div>
<div class="a" style="left:189.95px;top:354px;width:12px;height:62.8px;background:#24272c;border-radius:0 0 2px 2px"></div>
<div class="a" style="left:191.45px;top:405.5px;width:9px;height:9.5px;background:#3c4047;border-radius:1.5px"></div>
<div class="t" style="left:195.95px;top:407.8px;font-size:6.5px;color:#c9ccd1;transform:translateX(-50%)">D</div>
<div class="a" style="left:228.35px;top:354px;width:12px;height:62.8px;background:#24272c;border-radius:0 0 2px 2px"></div>
<div class="a" style="left:229.85px;top:405.5px;width:9px;height:9.5px;background:#3c4047;border-radius:1.5px"></div>
<div class="t" style="left:234.35px;top:407.8px;font-size:6.5px;color:#c9ccd1;transform:translateX(-50%)">G</div>
<div class="a" style="left:247.55px;top:354px;width:12px;height:62.8px;background:#24272c;border-radius:0 0 2px 2px"></div>
<div class="a" style="left:249.05px;top:405.5px;width:9px;height:9.5px;background:#3c4047;border-radius:1.5px"></div>
<div class="t" style="left:253.55px;top:407.8px;font-size:6.5px;color:#c9ccd1;transform:translateX(-50%)">H</div>
<div class="a" style="left:266.75px;top:354px;width:12px;height:62.8px;background:#24272c;border-radius:0 0 2px 2px"></div>
<div class="a" style="left:268.25px;top:405.5px;width:9px;height:9.5px;background:#3c4047;border-radius:1.5px"></div>
<div class="t" style="left:272.75px;top:407.8px;font-size:6.5px;color:#c9ccd1;transform:translateX(-50%)">J</div>
<div class="a" style="left:305.15px;top:354px;width:12px;height:62.8px;background:#24272c;border-radius:0 0 2px 2px"></div>
<div class="a" style="left:306.65px;top:405.5px;width:9px;height:9.5px;background:#3c4047;border-radius:1.5px"></div>
<div class="t" style="left:311.15px;top:407.8px;font-size:6.5px;color:#c9ccd1;transform:translateX(-50%)">L</div>
<div class="a" style="left:324.35px;top:354px;width:12px;height:62.8px;background:#24272c;border-radius:0 0 2px 2px"></div>
<div class="a" style="left:325.85px;top:405.5px;width:9px;height:9.5px;background:#3c4047;border-radius:1.5px"></div>
<div class="t" style="left:330.35px;top:407.8px;font-size:6.5px;color:#c9ccd1;transform:translateX(-50%)">;</div>
<div class="a" style="left:362.75px;top:354px;width:12px;height:62.8px;background:#24272c;border-radius:0 0 2px 2px"></div>
<div class="a" style="left:364.25px;top:405.5px;width:9px;height:9.5px;background:#3c4047;border-radius:1.5px"></div>
<div class="t" style="left:368.75px;top:407.8px;font-size:6.5px;color:#c9ccd1;transform:translateX(-50%)">3</div>
<div class="a" style="left:381.95px;top:354px;width:12px;height:62.8px;background:#24272c;border-radius:0 0 2px 2px"></div>
<div class="a" style="left:383.45px;top:405.5px;width:9px;height:9.5px;background:#3c4047;border-radius:1.5px"></div>
<div class="t" style="left:387.95px;top:407.8px;font-size:6.5px;color:#c9ccd1;transform:translateX(-50%)">4</div>
<div class="a" style="left:401.15px;top:354px;width:12px;height:62.8px;background:#24272c;border-radius:0 0 2px 2px"></div>
<div class="a" style="left:402.65px;top:405.5px;width:9px;height:9.5px;background:#3c4047;border-radius:1.5px"></div>
<div class="t" style="left:407.15px;top:407.8px;font-size:6.5px;color:#c9ccd1;transform:translateX(-50%)">5</div>
<div class="a" style="left:439.55px;top:354px;width:12px;height:62.8px;background:#24272c;border-radius:0 0 2px 2px"></div>
<div class="a" style="left:441.05px;top:405.5px;width:9px;height:9.5px;background:#3c4047;border-radius:1.5px"></div>
<div class="t" style="left:445.55px;top:407.8px;font-size:6.5px;color:#c9ccd1;transform:translateX(-50%)">7</div>
<div class="a" style="left:458.75px;top:354px;width:12px;height:62.8px;background:#24272c;border-radius:0 0 2px 2px"></div>
<div class="a" style="left:460.25px;top:405.5px;width:9px;height:9.5px;background:#3c4047;border-radius:1.5px"></div>
<div class="t" style="left:464.75px;top:407.8px;font-size:6.5px;color:#c9ccd1;transform:translateX(-50%)">8</div>
<div class="a" style="left:497.15px;top:354px;width:12px;height:62.8px;background:#24272c;border-radius:0 0 2px 2px"></div>
<div class="a" style="left:498.65px;top:405.5px;width:9px;height:9.5px;background:#3c4047;border-radius:1.5px"></div>
<div class="t" style="left:503.15px;top:407.8px;font-size:6.5px;color:#c9ccd1;transform:translateX(-50%)">0</div>
<div class="a" style="left:569.5px;top:326px;width:5.5px;height:73px;background:#1c1f23;border-radius:1px"></div>
<div class="a" style="left:569.5px;top:355.5px;width:5.5px;height:43.5px;background:#20c27a;"></div>
<div class="a" style="left:559px;top:330px;width:7px;height:0.8px;background:#3b4148;"></div>
<div class="a" style="left:578px;top:330px;width:7px;height:0.8px;background:#3b4148;"></div>
<div class="a" style="left:559px;top:338px;width:7px;height:0.8px;background:#3b4148;"></div>
<div class="a" style="left:578px;top:338px;width:7px;height:0.8px;background:#3b4148;"></div>
<div class="a" style="left:559px;top:346px;width:7px;height:0.8px;background:#3b4148;"></div>
<div class="a" style="left:578px;top:346px;width:7px;height:0.8px;background:#3b4148;"></div>
<div class="a" style="left:559px;top:354px;width:7px;height:0.8px;background:#3b4148;"></div>
<div class="a" style="left:578px;top:354px;width:7px;height:0.8px;background:#3b4148;"></div>
<div class="a" style="left:559px;top:362px;width:7px;height:0.8px;background:#3b4148;"></div>
<div class="a" style="left:578px;top:362px;width:7px;height:0.8px;background:#3b4148;"></div>
<div class="a" style="left:559px;top:370px;width:7px;height:0.8px;background:#3b4148;"></div>
<div class="a" style="left:578px;top:370px;width:7px;height:0.8px;background:#3b4148;"></div>
<div class="a" style="left:559px;top:378px;width:7px;height:0.8px;background:#3b4148;"></div>
<div class="a" style="left:578px;top:378px;width:7px;height:0.8px;background:#3b4148;"></div>
<div class="a" style="left:559px;top:386px;width:7px;height:0.8px;background:#3b4148;"></div>
<div class="a" style="left:578px;top:386px;width:7px;height:0.8px;background:#3b4148;"></div>
<div class="a" style="left:559px;top:394px;width:7px;height:0.8px;background:#3b4148;"></div>
<div class="a" style="left:578px;top:394px;width:7px;height:0.8px;background:#3b4148;"></div>
<div class="a" style="left:569.5px;top:326px;width:5.5px;height:30px;background:#1c1f23;border-radius:1px"></div>
<div class="a" style="left:568px;top:340.5px;width:8.5px;height:14.5px;background:#3a3e45;border-radius:1px"></div>
<svg class="a" style="left:569.5px;top:345px;" width="5.5" height="6" viewBox="0 0 5.5 6"><path d="M0.5 0.8h4.5M0.5 2.8h4.5M0.5 4.8h4.5" stroke="#d6d9dd" stroke-width="0.9"/></svg>
<svg class="a" style="left:544px;top:413.5px;" width="22" height="22" viewBox="0 0 22 22"><circle cx="11" cy="11" r="10.5" fill="#31363c"/><circle cx="11" cy="11" r="8" fill="#272b31"/><circle cx="3.36" cy="18.64" r="0.6" fill="#4a4f56"/><circle cx="0.36" cy="12.88" r="0.6" fill="#4a4f56"/><circle cx="1.21" cy="6.44" r="0.6" fill="#4a4f56"/><circle cx="5.60" cy="1.65" r="0.6" fill="#4a4f56"/><circle cx="11.00" cy="0.20" r="0.6" fill="#4a4f56"/><circle cx="16.40" cy="1.65" r="0.6" fill="#4a4f56"/><circle cx="20.79" cy="6.44" r="0.6" fill="#4a4f56"/><circle cx="21.64" cy="12.88" r="0.6" fill="#4a4f56"/><circle cx="18.64" cy="18.64" r="0.6" fill="#4a4f56"/><path d="M11 5.5 V11.5" stroke="#eef0f2" stroke-width="1.4"/></svg>
<div class="t" style="left:542px;top:429px;font-size:6px;color:#c9cdd2;font-weight:bold;-webkit-text-stroke:0">L</div>
<div class="t" style="left:564px;top:429px;font-size:6px;color:#c9cdd2;font-weight:bold;-webkit-text-stroke:0">R</div>
<div class="t" style="left:549.5px;top:438px;font-size:5px;color:#cfd3d8;">PAN</div>
<svg class="a" style="left:577px;top:413px;" width="22" height="22" viewBox="0 0 22 22"><circle cx="11" cy="11" r="10" fill="#30353b"/><circle cx="11" cy="11" r="8.6" fill="#272b31"/><path d="M4.5 15.5 L10 12" stroke="#eef0f2" stroke-width="1.4"/></svg>
<div class="t" style="left:579.8px;top:438px;font-size:5px;color:#cfd3d8;letter-spacing:-0.2px">REVERB</div>
<div class="a" style="left:6px;top:457px;width:54.5px;height:15.5px;background:#21c373;border-radius:1px"></div>
<div class="a" style="left:11px;top:461px;width:6.5px;height:7px;background:#bdf0d5;border-radius:0.5px"></div>
<div class="t" style="left:20.4px;top:461.3px;font-size:7.5px;color:#effff6;">Instrument</div>
<div class="a" style="left:60.5px;top:457px;width:40px;height:15.5px;background:#23262b;"></div>
<div class="t" style="left:64.5px;top:461.3px;font-size:7.5px;color:#e3e5e8;font-weight:bold;-webkit-text-stroke:0"><i>Fx</i></div>
<div class="t" style="left:75.5px;top:461.3px;font-size:7.5px;color:#e3e5e8;">Effects</div>
<div class="a" style="left:102px;top:457px;width:54.5px;height:15.5px;background:#23262b;"></div>
<svg class="a" style="left:105.5px;top:461px;" width="8" height="7" viewBox="0 0 8 7"><path d="M0.5 4 L3 6 L7.5 0.8" stroke="#e3e5e8" stroke-width="1.5" fill="none"/></svg>
<div class="t" style="left:115.5px;top:461.3px;font-size:7.5px;color:#e3e5e8;">MIDI Editor</div>
<div class="a" style="left:384.5px;top:457.5px;width:58px;height:15px;background:#23262b;"></div>
<svg class="a" style="left:387.5px;top:460.5px;" width="7" height="8" viewBox="0 0 7 8"><path d="M0.5 7.5 L6.5 0.5 L4.5 6 Z" fill="#e3e5e8"/></svg>
<div class="t" style="left:397.4px;top:461.3px;font-size:7.5px;color:#e3e5e8;">Lyrics/Notes</div>
<div class="a" style="left:443.5px;top:457.5px;width:45px;height:15px;background:#23262b;"></div>
<svg class="a" style="left:447px;top:461.5px;" width="8" height="6" viewBox="0 0 8 6"><path d="M0.5 3 H6 M4 1 L6.5 3 L4 5" stroke="#e3e5e8" stroke-width="1.2" fill="none"/></svg>
<div class="t" style="left:456.6px;top:461.3px;font-size:7.5px;color:#e3e5e8;">Samples</div>
<div class="a" style="left:489.5px;top:457.5px;width:70.5px;height:15px;background:#23262b;"></div>
<svg class="a" style="left:492.8px;top:462px;" width="9" height="5" viewBox="0 0 9 5"><rect x="0.5" y="0.5" width="8" height="4" rx="1" fill="#e3e5e8"/></svg>
<div class="t" style="left:503.6px;top:461.3px;font-size:7.5px;color:#e3e5e8;">MIDI Mappings</div>
<div class="a" style="left:567.5px;top:457.5px;width:33px;height:15px;background:#23262b;"></div>
<svg class="a" style="left:570.5px;top:461px;" width="8" height="7" viewBox="0 0 8 7"><circle cx="3.3" cy="3.3" r="3" fill="#e3e5e8"/><circle cx="5.5" cy="4.2" r="2.2" fill="#e3e5e8"/></svg>
<div class="t" style="left:580.8px;top:461.3px;font-size:7.5px;color:#e3e5e8;">Chat</div>
</div></body></html>
